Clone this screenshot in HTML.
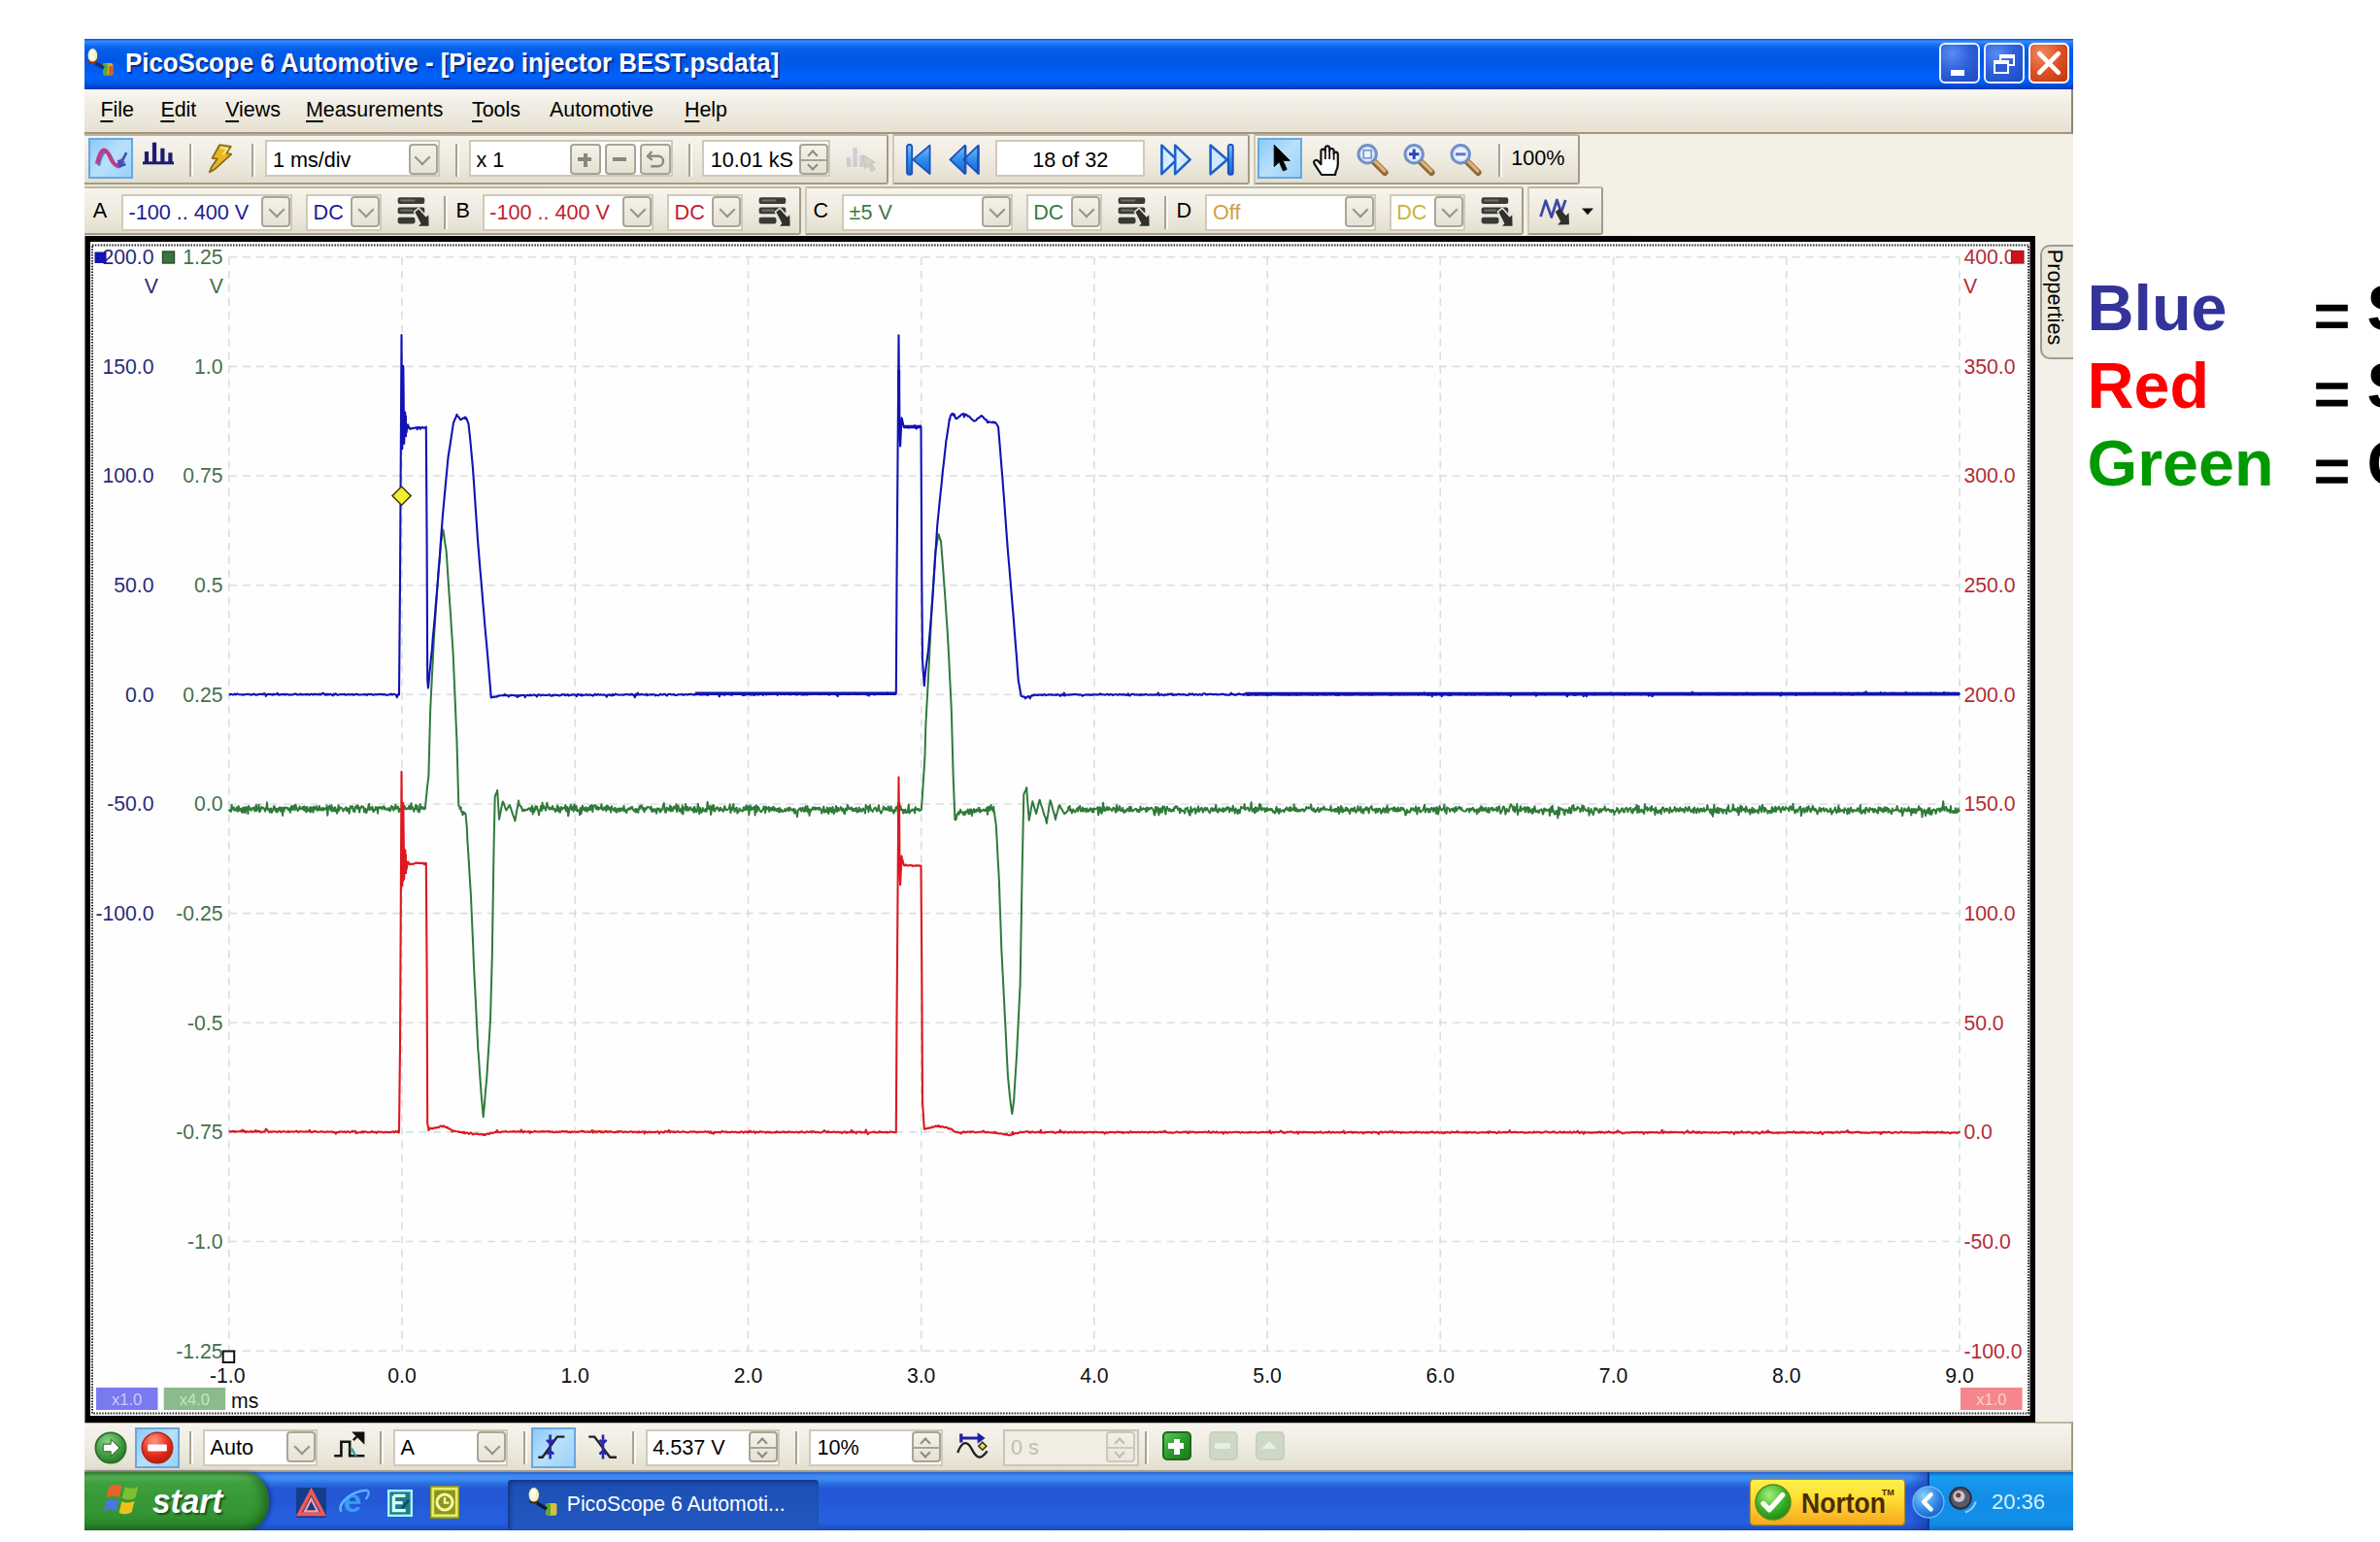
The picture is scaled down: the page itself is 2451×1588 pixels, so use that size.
<!DOCTYPE html>
<html>
<head>
<meta charset="utf-8">
<title>PicoScope 6 Automotive</title>
<style>
html,body{margin:0;padding:0;background:#fff;}
body{width:2451px;height:1588px;overflow:hidden;position:relative;font-family:"Liberation Sans",sans-serif;}
#scr{position:absolute;left:87px;top:40px;width:1024px;height:768px;transform:scale(2);transform-origin:0 0;
  font-family:"Liberation Sans",sans-serif;font-size:11px;color:#000;overflow:hidden;background:#ece9d8;}
#scr *{box-sizing:border-box;}
.abs{position:absolute;}
/* ---------- title bar ---------- */
#title{position:absolute;left:0;top:0;width:1024px;height:26px;
  background:linear-gradient(to bottom,#0a50d8 0%,#3a8cfc 5%,#1a74f6 11%,#0560ea 20%,#0056e4 42%,#005cf2 62%,#0062fc 76%,#005cf0 86%,#0046d0 94%,#0a36b4 100%);}
#title .cap{position:absolute;left:21px;top:4.200px;font-weight:bold;font-size:14px;color:#fff;white-space:nowrap;
  transform:scaleX(.922);transform-origin:0 0;text-shadow:1px 1px 0 #0a2a8a;}
.tb{position:absolute;top:2px;width:21px;height:21px;border:1px solid #e8f4ff;border-radius:3px;
  background:radial-gradient(circle at 30% 25%,#5a8cf4 0%,#2e62dc 45%,#1c48c0 100%);}
.tb.close{background:radial-gradient(circle at 30% 25%,#f08a60 0%,#de5024 50%,#c0360e 100%);border-color:#fff;}
/* ---------- menu ---------- */
#menu{position:absolute;left:0;top:26px;width:1024px;height:22.5px;
  background:linear-gradient(to bottom,#faf7f2 0%,#efede2 40%,#e8e1d2 100%);border-bottom:1px solid #a2967e;border-right:1px solid #8e8672;}
#menu span{position:absolute;top:3.900px;font-size:10.7px;white-space:nowrap;}
#menu u{text-decoration:underline;text-underline-offset:1.5px;}
/* ---------- tool strips ---------- */
.panel{position:absolute;left:0;width:1024px;background:linear-gradient(to right,#ebe7d8,#f3f1e6 80%);}
.strip{position:absolute;height:25px;border-radius:0 1.5px 1.5px 0;
  background:linear-gradient(to bottom,#f7f4ee 0%,#efebe0 50%,#e3decf 100%);
  border-bottom:1px solid #a39b88;border-right:1px solid #a39b88;border-top:1px solid #bdb5a2;border-left:1px solid #cfc8b6;}
.sep{position:absolute;width:1px;height:17px;background:#a8a293;box-shadow:1px 0 0 #fbfaf6;}
.cb{position:absolute;height:19px;background:#fff;border:1px solid #cfcab9;font-size:10.8px;line-height:17px;white-space:nowrap;}
.cb .t{position:absolute;top:0.3px;}
.dd{position:absolute;top:.7px;width:15px;height:15.6px;border:1px solid #a9a698;border-radius:2px;
  background:linear-gradient(#f3f1e9,#e6e2d5);}
.dd:after{content:"";position:absolute;left:3.9px;top:3.2px;width:5px;height:5px;border-right:1.3px solid #96938a;border-bottom:1.3px solid #96938a;transform:rotate(45deg);}
.sp{position:absolute;top:.7px;width:15px;height:15.6px;border:1px solid #a7a496;border-radius:2px;
  background:linear-gradient(#f4f2ea,#e4e0d2);}
.sp:before{content:"";position:absolute;left:0;right:0;top:6.6px;height:1px;background:#a7a496;}
.sp i{position:absolute;left:4.3px;width:4px;height:4px;border-left:1.2px solid #8d8a7e;border-top:1.2px solid #8d8a7e;}
.sp i.u{top:2.8px;transform:rotate(45deg);}
.sp i.d{top:7.8px;transform:rotate(225deg);}
.lbl{position:absolute;font-size:10.8px;white-space:nowrap;}
.hl{position:absolute;border:1px solid #6aa6e0;background:linear-gradient(135deg,#8ccaf6 0%,#b8e0fa 50%,#9ad2f8 100%);}
.sbtn{position:absolute;width:16px;height:16px;border:1px solid #a7a496;border-radius:2px;background:linear-gradient(#f4f2ea,#e4e0d2);}
svg.ic{position:absolute;overflow:visible;}
/* ---------- task bar ---------- */
#task{position:absolute;left:0;top:738px;width:1024px;height:30px;
  background:linear-gradient(to bottom,#2a62cc 0%,#3a8af2 6%,#3c8cf4 12%,#2c6ee2 20%,#2458d6 28%,#2456d6 45%,#255edc 70%,#2560de 86%,#2156d0 93%,#1c48b4 100%);}
#start{position:absolute;left:0;top:0;width:95px;height:30px;border-radius:0 12px 12px 0 / 0 15px 15px 0;
  background:linear-gradient(to bottom,#3c8c3c 0%,#56b456 8%,#3fa23f 18%,#379a37 40%,#339633 70%,#2c8a2c 88%,#236f23 100%);
  box-shadow:inset -3px 0 5px rgba(20,70,20,.55), 1px 0 2px rgba(10,30,90,.6);}
#start b{position:absolute;left:34.6px;top:4.800px;font-size:17.800px;font-style:italic;font-weight:bold;color:#fff;transform:scaleX(.94);transform-origin:0 0;
  text-shadow:1px 1px 1px #1c501c;}
#tray{position:absolute;left:949px;top:0;width:75px;height:30px;border-left:1px solid #0e3a96;
  background:linear-gradient(to bottom,#0e62c0 0%,#18a0f0 8%,#1696ec 18%,#128ce6 50%,#1290ea 80%,#1086e0 92%,#0c6cc4 100%);}
#tbtn{position:absolute;left:218px;top:4px;width:159.5px;height:26px;border-radius:2px;
  background:linear-gradient(#1c4cb0,#1e52b8 30%,#2158c0);box-shadow:inset 1px 1px 2px #123480;color:#fff;}
/* ---------- legend ---------- */
.leg{position:absolute;font-weight:bold;font-size:66.5px;line-height:80px;white-space:nowrap;}
</style>
</head>
<body>
<div id="scr">
  <!-- title bar -->
  <div id="title">
    <svg class="ic" style="left:1px;top:4px" width="17" height="17" viewBox="0 0 17 17">
      <ellipse cx="3.2" cy="4.6" rx="2.4" ry="3.6" fill="#f4f0b8"/><ellipse cx="3" cy="4.2" rx="1.2" ry="2.4" fill="#fffef0"/>
      <path d="M1 6.5q2.2 2.6 4.4 0v1.6q-2.2 1.6-4.4 0z" fill="#a03028"/>
      <rect x="8.5" y="8.5" width="5.2" height="6.2" rx="1" fill="#c8b030"/><rect x="8.5" y="8.5" width="2.4" height="6.2" rx="1" fill="#58a838"/>
      <path d="M4.5 8.5L9 11" stroke="#203060" stroke-width="1.6"/><rect x="11.6" y="10" width="2.2" height="4.6" fill="#d06020"/>
    </svg>
    <div class="cap">PicoScope 6 Automotive - [Piezo injector BEST.psdata]</div>
    <div class="tb" style="left:955px"><i class="abs" style="left:4.5px;top:13px;width:7px;height:3px;background:#fff"></i></div>
    <div class="tb" style="left:978px">
      <i class="abs" style="left:7px;top:4.5px;width:7.5px;height:6.5px;border:1px solid #fff;border-top-width:2px"></i>
      <i class="abs" style="left:4.2px;top:7.6px;width:7.5px;height:7px;border:1px solid #fff;border-top-width:2.2px;background:#2c5cd4"></i>
    </div>
    <div class="tb close" style="left:1001px">
      <svg class="ic" style="left:0;top:0" width="19" height="19" viewBox="0 0 19 19"><path d="M4.6 4.6L14.4 14.4M14.4 4.6L4.6 14.4" stroke="#fff" stroke-width="2.3" stroke-linecap="round"/></svg>
    </div>
  </div>
  <!-- menu bar -->
  <div id="menu">
    <span style="left:8.2px"><u>F</u>ile</span>
    <span style="left:39.2px"><u>E</u>dit</span>
    <span style="left:72.6px"><u>V</u>iews</span>
    <span style="left:114px"><u>M</u>easurements</span>
    <span style="left:199.5px"><u>T</u>ools</span>
    <span style="left:239.5px">Automotive</span>
    <span style="left:309px"><u>H</u>elp</span>
  </div>
    <!-- shared svg symbols -->
  <svg width="0" height="0" style="position:absolute">
    <defs>
      
      <linearGradient id="nav" x1="0" y1="0" x2="0" y2="1"><stop offset="0" stop-color="#7cc0f8"/><stop offset=".5" stop-color="#2f8cec"/><stop offset="1" stop-color="#1a62cc"/></linearGradient>
      
    </defs>
  </svg>

  <!-- ================= row 1 ================= -->
  <div class="panel" style="top:48.5px;height:27.5px"></div>
  <div class="strip" style="left:-2px;top:49.3px;width:415.5px;height:25.6px"></div>
  <div class="strip" style="left:416px;top:49.3px;width:183.5px;height:25.6px"></div>
  <div class="strip" style="left:602px;top:49.3px;width:167.5px;height:25.6px"></div>

  <div class="hl" style="left:2.2px;top:51.4px;width:22.4px;height:20.8px"></div>
  <svg class="ic" style="left:4.6px;top:54px" width="18" height="15" viewBox="0 0 18 15">
    <path d="M1.4 10.4C3.4 1.6 5.8 1.6 8.2 7S12.6 12 14.4 8" fill="none" stroke="#5a78d8" stroke-width="1.6" transform="translate(.9,.9)"/>
    <path d="M1.4 10.4C3.4 1.6 5.8 1.6 8.2 7S12.6 12 14.4 8" fill="none" stroke="#c03c82" stroke-width="2"/>
    <path d="M13.2 11.2l3.4-6.6M12.6 8.4l.6 3 3-.8" fill="none" stroke="#3c50b4" stroke-width="1.3"/>
  </svg>
  <svg class="ic" style="left:29.6px;top:52.6px" width="16" height="12" viewBox="0 0 16 12">
    <path d="M0 10.9h16" stroke="#1c1c70" stroke-width="1.5"/>
    <path d="M2 11V5M6 11V.4M10.2 11V3.4M14.2 11V5.6" stroke="#1c1c70" stroke-width="2.1"/>
  </svg>
  <div class="sep" style="left:53.8px;top:53.5px"></div>
  <svg class="ic" style="left:63px;top:54px" width="14" height="15" viewBox="0 0 14 15">
    <path d="M6.6 .6l5.8 .8-2.2 3.4 2.4 .6-8.6 7.8-2.6 1.4 1-2.6 3-4.2-2.6-.4z" fill="#e8b828" stroke="#8a6a18" stroke-width=".9" stroke-linejoin="round"/>
    <path d="M7 2l3.6 .6-2.2 3" fill="none" stroke="#fbe88a" stroke-width="1"/>
  </svg>
  <div class="sep" style="left:85.9px;top:53.5px"></div>

  <div class="cb" style="left:92.8px;top:52.3px;width:90.4px"><span class="t" style="left:3.2px">1 ms/div</span><i class="dd" style="left:72.8px"></i></div>
  <div class="sep" style="left:190.9px;top:53.5px"></div>
  <div class="cb" style="left:198.2px;top:52.3px;width:105px"><span class="t" style="left:2.6px">x 1</span>
    <i class="sbtn" style="left:50.6px;top:1px"><b class="abs" style="left:3.6px;top:5.9px;width:6.8px;height:2.2px;background:#8a877c"></b><b class="abs" style="left:5.9px;top:3.6px;width:2.2px;height:6.8px;background:#8a877c"></b></i>
    <i class="sbtn" style="left:68.5px;top:1px"><b class="abs" style="left:3.8px;top:5.9px;width:6.4px;height:2.2px;background:#8a877c"></b></i>
    <i class="sbtn" style="left:86.5px;top:1px"><svg class="ic" style="left:2px;top:2px" width="10" height="10" viewBox="0 0 10 10"><path d="M3.2 1L1 3.4 3.4 5.4M1.2 3.4H6.4A2.5 2.5 0 0 1 6.4 8.6H2.6" fill="none" stroke="#8d8a7e" stroke-width="1.2"/></svg></i>
  </div>
  <div class="sep" style="left:310.8px;top:53.5px"></div>
  <div class="cb" style="left:318px;top:52.3px;width:66.4px"><span class="t" style="left:3.4px">10.01 kS</span><i class="sp" style="left:48.8px"><i class="u"></i><i class="d"></i></i></div>
  <svg class="ic" style="left:391.5px;top:54px;opacity:.55" width="17" height="15" viewBox="0 0 17 15">
    <path d="M1.5 12V7M4.8 12V2M8.2 12V6" stroke="#b7b4c8" stroke-width="2.2"/>
    <path d="M9 6l6 3.6-2 .6 2 3-1.6 1-1.8-3-1.6 1.4z" fill="#c4c0b8" stroke="#aaa69a" stroke-width=".6"/>
  </svg>

  <!-- buffer navigation -->
  <svg class="ic" style="left:423.4px;top:53.6px" width="13" height="16.4" viewBox="0 0 13 16.4">
    <rect x=".5" y=".5" width="2.6" height="15.4" rx="1" fill="url(#nav)" stroke="#1a50b8" stroke-width=".9"/>
    <path d="M12.3 .8v14.8L3.6 8.2z" fill="url(#nav)" stroke="#1a50b8" stroke-width=".9" stroke-linejoin="round"/>
  </svg>
  <svg class="ic" style="left:445.4px;top:53.6px" width="16" height="16.4" viewBox="0 0 16 16.4">
    <path d="M8.4 .8v14.8L.7 8.2z" fill="url(#nav)" stroke="#1a50b8" stroke-width=".9" stroke-linejoin="round"/>
    <path d="M15.3 .8v14.8L7.6 8.2z" fill="url(#nav)" stroke="#1a50b8" stroke-width=".9" stroke-linejoin="round"/>
    <path d="M8.6 1v14.4M15.2 1v14.4" stroke="#1a50b8" stroke-width="1.2"/>
  </svg>
  <div class="cb" style="left:469px;top:52.3px;width:77.2px;text-align:center"><span class="t" style="left:0;right:0">18 of 32</span></div>
  <svg class="ic" style="left:554px;top:53.6px" width="16" height="16.4" viewBox="0 0 16 16.4">
    <path d="M.7 .8v14.8L8.4 8.2z" fill="#d8ecfc" stroke="#1a62cc" stroke-width="1.3" stroke-linejoin="round"/>
    <path d="M7.6 .8v14.8L15.3 8.2z" fill="#d8ecfc" stroke="#1a62cc" stroke-width="1.3" stroke-linejoin="round"/>
  </svg>
  <svg class="ic" style="left:579.4px;top:53.6px" width="13" height="16.4" viewBox="0 0 13 16.4">
    <path d="M.8 .8v14.8L9.4 8.2z" fill="#cfe6fb" stroke="#1a62cc" stroke-width="1.3" stroke-linejoin="round"/>
    <rect x="9.9" y=".5" width="2.5" height="15.4" rx="1" fill="url(#nav)" stroke="#1a50b8" stroke-width=".9"/>
  </svg>

  <!-- pointer tools -->
  <div class="hl" style="left:604.2px;top:51.2px;width:22.6px;height:21px"></div>
  <svg class="ic" style="left:611.5px;top:54.2px" width="10" height="15" viewBox="0 0 10 15">
    <path d="M.6 .6v11.2l2.6-2.4 2 4.6 1.9-.8-2-4.5h3.6z" fill="#000" stroke="#111" stroke-width=".5" stroke-linejoin="round"/>
  </svg>
  <svg class="ic" style="left:631.6px;top:53.6px" width="17" height="17" viewBox="0 0 17 17">
    <path d="M5 16L1.4 10.6q-.9-1.6.5-2.1 1-.3 1.9 1l.9 1.1V4q0-1.2 1.1-1.2T6.9 4V2.4q0-1.2 1.1-1.2t1.1 1.2V3.6q0-1.1 1.1-1.1t1.1 1.2v1.6q0-1 1-1t1.100 1.2V10.400q0 2.200-1 3.800L12 16z" fill="#fff" stroke="#111" stroke-width="1.1" stroke-linejoin="round"/>
    <path d="M6.9 4v4M9.100 3.600v4.400M11.300 5v3.400" stroke="#111" stroke-width=".9"/>
  </svg>
  <svg class="ic" style="left:655.2px;top:53.6px" width="17" height="17" viewBox="0 0 17 17"><path d="M8.2 8.4L14.6 14.8" stroke="#8a6a40" stroke-width="3.4" stroke-linecap="round"/>
        <path d="M8.6 8.2L14.4 14" stroke="#e8b070" stroke-width="1.6" stroke-linecap="round"/>
        <circle cx="5.6" cy="5.4" r="4.6" fill="#d8e6fa" stroke="#7090c8" stroke-width="1.5"/>
        <circle cx="5.6" cy="5.4" r="3" fill="#f2f7ff" opacity=".8"/><rect x="3.6" y="3.4" width="4" height="4" fill="none" stroke="#7d9ad0" stroke-width=".9"/></svg>
  <svg class="ic" style="left:679.2px;top:53.6px" width="17" height="17" viewBox="0 0 17 17"><path d="M8.2 8.4L14.6 14.8" stroke="#8a6a40" stroke-width="3.4" stroke-linecap="round"/>
        <path d="M8.6 8.2L14.4 14" stroke="#e8b070" stroke-width="1.6" stroke-linecap="round"/>
        <circle cx="5.6" cy="5.4" r="4.6" fill="#d8e6fa" stroke="#7090c8" stroke-width="1.5"/>
        <circle cx="5.6" cy="5.4" r="3" fill="#f2f7ff" opacity=".8"/><path d="M3 5.4h5.2M5.6 2.8v5.2" stroke="#2848b0" stroke-width="1.5"/></svg>
  <svg class="ic" style="left:703.2px;top:53.6px" width="17" height="17" viewBox="0 0 17 17"><path d="M8.2 8.4L14.6 14.8" stroke="#8a6a40" stroke-width="3.4" stroke-linecap="round"/>
        <path d="M8.6 8.2L14.4 14" stroke="#e8b070" stroke-width="1.6" stroke-linecap="round"/>
        <circle cx="5.6" cy="5.4" r="4.6" fill="#d8e6fa" stroke="#7090c8" stroke-width="1.5"/>
        <circle cx="5.6" cy="5.4" r="3" fill="#f2f7ff" opacity=".8"/><path d="M3 5.4h5.2" stroke="#5a78c4" stroke-width="1.5"/></svg>
  <div class="sep" style="left:727.8px;top:53.5px"></div>
  <div class="lbl" style="left:734.6px;top:55.4px;line-height:13px">100%</div>

  <!-- ================= row 2 ================= -->
  <div class="panel" style="top:76px;height:26px"></div>
  <div class="strip" style="left:-2px;top:76.3px;width:370.8px;height:25.2px"></div>
  <div class="strip" style="left:371px;top:76.3px;width:369.8px;height:25.2px"></div>
  <div class="strip" style="left:743px;top:76.3px;width:38.6px;height:25.2px"></div>

  <div class="lbl" style="left:4.4px;top:81.9px;line-height:13px">A</div>
  <div class="cb" style="left:19.2px;top:79.6px;width:88px;color:#1c1c90"><span class="t" style="left:2.6px">-100 .. 400 V</span><i class="dd" style="left:70.8px"></i></div>
  <div class="cb" style="left:114px;top:79.6px;width:39px;color:#1c1c90"><span class="t" style="left:2.8px">DC</span><i class="dd" style="left:21.8px"></i></div>
  <svg class="ic" style="left:160.8px;top:80.8px" width="17" height="17" viewBox="0 0 16 16"><rect x="0.3" y="0.6" width="13" height="3.2" rx="1" fill="#3a3a36"/>
        <rect x="0.3" y="5.4" width="13" height="3.2" rx="1" fill="#3a3a36"/>
        <rect x="0.3" y="10.2" width="8.4" height="3.2" rx="1" fill="#3a3a36"/>
        <rect x="1.6" y="1.6" width="7" height="1" fill="#70706a"/><rect x="1.6" y="6.4" width="6" height="1" fill="#70706a"/>
        <path d="M8.2 7.6l2.2-1.8 3.6 3.9 1.5-1.4 .2 6.4-6.2.1 1.6-1.6z" fill="#30302c" stroke="#e8e4d8" stroke-width=".7"/></svg>
  <div class="sep" style="left:185px;top:80.5px"></div>

  <div class="lbl" style="left:191.3px;top:81.9px;line-height:13px">B</div>
  <div class="cb" style="left:205px;top:79.6px;width:88px;color:#c02030"><span class="t" style="left:2.6px">-100 .. 400 V</span><i class="dd" style="left:70.8px"></i></div>
  <div class="cb" style="left:300px;top:79.6px;width:39.2px;color:#c02030"><span class="t" style="left:2.8px">DC</span><i class="dd" style="left:22px"></i></div>
  <svg class="ic" style="left:346.5px;top:80.8px" width="17" height="17" viewBox="0 0 16 16"><rect x="0.3" y="0.6" width="13" height="3.2" rx="1" fill="#3a3a36"/>
        <rect x="0.3" y="5.4" width="13" height="3.2" rx="1" fill="#3a3a36"/>
        <rect x="0.3" y="10.2" width="8.4" height="3.2" rx="1" fill="#3a3a36"/>
        <rect x="1.6" y="1.6" width="7" height="1" fill="#70706a"/><rect x="1.6" y="6.4" width="6" height="1" fill="#70706a"/>
        <path d="M8.2 7.6l2.2-1.8 3.6 3.9 1.5-1.4 .2 6.4-6.2.1 1.6-1.6z" fill="#30302c" stroke="#e8e4d8" stroke-width=".7"/></svg>

  <div class="lbl" style="left:375.2px;top:81.9px;line-height:13px">C</div>
  <div class="cb" style="left:389.8px;top:79.6px;width:88.4px;color:#3a7a42"><span class="t" style="left:3px">&#177;5 V</span><i class="dd" style="left:71.2px"></i></div>
  <div class="cb" style="left:485px;top:79.6px;width:39.2px;color:#3a7a42"><span class="t" style="left:2.6px">DC</span><i class="dd" style="left:22px"></i></div>
  <svg class="ic" style="left:531.5px;top:80.8px" width="17" height="17" viewBox="0 0 16 16"><rect x="0.3" y="0.6" width="13" height="3.2" rx="1" fill="#3a3a36"/>
        <rect x="0.3" y="5.4" width="13" height="3.2" rx="1" fill="#3a3a36"/>
        <rect x="0.3" y="10.2" width="8.4" height="3.2" rx="1" fill="#3a3a36"/>
        <rect x="1.6" y="1.6" width="7" height="1" fill="#70706a"/><rect x="1.6" y="6.4" width="6" height="1" fill="#70706a"/>
        <path d="M8.2 7.6l2.2-1.8 3.6 3.9 1.5-1.4 .2 6.4-6.2.1 1.6-1.6z" fill="#30302c" stroke="#e8e4d8" stroke-width=".7"/></svg>
  <div class="sep" style="left:556px;top:80.5px"></div>

  <div class="lbl" style="left:562.2px;top:81.9px;line-height:13px">D</div>
  <div class="cb" style="left:577px;top:79.6px;width:88.2px;color:#d0a040"><span class="t" style="left:3px">Off</span><i class="dd" style="left:71px"></i></div>
  <div class="cb" style="left:671.8px;top:79.6px;width:39.6px;color:#c8b440"><span class="t" style="left:2.8px">DC</span><i class="dd" style="left:22.2px"></i></div>
  <svg class="ic" style="left:718.6px;top:80.8px" width="17" height="17" viewBox="0 0 16 16"><rect x="0.3" y="0.6" width="13" height="3.2" rx="1" fill="#3a3a36"/>
        <rect x="0.3" y="5.4" width="13" height="3.2" rx="1" fill="#3a3a36"/>
        <rect x="0.3" y="10.2" width="8.4" height="3.2" rx="1" fill="#3a3a36"/>
        <rect x="1.6" y="1.6" width="7" height="1" fill="#70706a"/><rect x="1.6" y="6.4" width="6" height="1" fill="#70706a"/>
        <path d="M8.2 7.6l2.2-1.8 3.6 3.9 1.5-1.4 .2 6.4-6.2.1 1.6-1.6z" fill="#30302c" stroke="#e8e4d8" stroke-width=".7"/></svg>

  <svg class="ic" style="left:749px;top:80.6px" width="18" height="16" viewBox="0 0 18 16">
    <path d="M.8 10.6L3.4 2.4l3 8.4L9.2 2l2.2 6.4L13.6 2" fill="none" stroke="#3c48a8" stroke-width="1.4" stroke-linejoin="round"/>
    <path d="M8.4 8l2.2-1.6 3.2 3.6 1.5-1.4 .2 6-6 .1 1.6-1.6z" fill="#30302c"/>
  </svg>
  <svg class="ic" style="left:771px;top:87.4px" width="6" height="4" viewBox="0 0 6 4"><path d="M0 .2h6L3 3.6z" fill="#111"/></svg>

    <!-- ================= right-hand properties strip ================= -->
  <div class="abs" style="left:1004.5px;top:101.5px;width:19.5px;height:611px;background:#f2f0e9"></div>
  <div class="abs" style="left:1007.2px;top:106px;width:18px;height:59.4px;background:#ebe8dc;border:1px solid #9c9a92;border-right:0;border-radius:5px 0 0 5px"></div>
  <div class="abs" style="left:1014.8px;top:133.4px;width:0;height:0">
    <div class="abs" style="left:-30px;top:-7px;width:60px;height:14px;line-height:14px;text-align:center;transform:rotate(90deg);font-size:10.8px;white-space:nowrap">Properties</div>
  </div>

  <!-- ================= bottom tool strip ================= -->
  <div class="panel" style="top:712.3px;height:26px"></div>
  <div class="strip" style="left:-2px;top:712.4px;width:1026px;height:25.4px;border-radius:0"></div>

  <svg class="ic" style="left:5.4px;top:716.8px" width="17" height="17" viewBox="0 0 17 17">
    <defs><radialGradient id="gg" cx=".4" cy=".3" r=".8"><stop offset="0" stop-color="#8ad48a"/><stop offset=".6" stop-color="#3c9a3c"/><stop offset="1" stop-color="#226c22"/></radialGradient></defs>
    <circle cx="8.5" cy="8.5" r="7.8" fill="url(#gg)" stroke="#2c6e2c" stroke-width=".9"/>
    <path d="M4.6 6.6h4V4.2l4.4 4.3-4.4 4.3v-2.4h-4z" fill="#fff" stroke="#2a5a2a" stroke-width=".5"/>
  </svg>
  <div class="hl" style="left:25.8px;top:714.5px;width:22.8px;height:21.6px"></div>
  <svg class="ic" style="left:29.2px;top:716.8px" width="17" height="17" viewBox="0 0 17 17">
    <defs><radialGradient id="rg" cx=".4" cy=".28" r=".8"><stop offset="0" stop-color="#ff9a88"/><stop offset=".55" stop-color="#e8301e"/><stop offset="1" stop-color="#b01408"/></radialGradient></defs>
    <circle cx="8.5" cy="8.5" r="7.9" fill="url(#rg)" stroke="#b02818" stroke-width=".7"/>
    <rect x="3.6" y="6.8" width="9.8" height="3.4" rx=".6" fill="#fff"/>
  </svg>
  <div class="sep" style="left:54px;top:716.5px"></div>
  <div class="cb" style="left:61px;top:715.8px;width:59.4px"><span class="t" style="left:2.8px">Auto</span><i class="dd" style="left:42px"></i></div>
  <svg class="ic" style="left:127.6px;top:716.8px" width="17" height="17" viewBox="0 0 17 17">
    <path d="M.6 12.6h3.6V5.4h4.4v7.2h7.6" fill="none" stroke="#111" stroke-width="1.3"/>
    <path d="M8.8 8.4c1.4.2 1.6 4 3.4 4" fill="none" stroke="#3a9aa0" stroke-width="1.2"/>
    <path d="M10.4 4.6L13 2M11 .8h4.6v4.6z" fill="#111" stroke="#111" stroke-width="1.2"/>
  </svg>
  <div class="sep" style="left:152px;top:716.5px"></div>
  <div class="cb" style="left:159px;top:715.8px;width:59.4px"><span class="t" style="left:2.8px">A</span><i class="dd" style="left:42.2px"></i></div>
  <div class="sep" style="left:226px;top:716.5px"></div>
  <div class="hl" style="left:230px;top:714.5px;width:22.6px;height:21.6px"></div>
  <svg class="ic" style="left:233.4px;top:717.6px" width="16" height="15" viewBox="0 0 16 15">
    <path d="M.6 12.4h2.2l7.6-10.6h3.8" fill="none" stroke="#222" stroke-width="1.2"/>
    <path d="M6.8 .8v12.4M5 3.4l1.8 1.8 1.8-1.8M5 10.8l1.8-1.8 1.8 1.8" fill="none" stroke="#2828a8" stroke-width="1.3"/>
  </svg>
  <svg class="ic" style="left:258.6px;top:717.6px" width="16" height="15" viewBox="0 0 16 15">
    <path d="M.6 1.8h3l8 10.6h3.4" fill="none" stroke="#222" stroke-width="1.2"/>
    <path d="M8 .8v12.4M6.2 3.4l1.8 1.8 1.8-1.8M6.2 10.8l1.8-1.8 1.8 1.8" fill="none" stroke="#2828a8" stroke-width="1.3"/>
  </svg>
  <div class="sep" style="left:282px;top:716.5px"></div>
  <div class="cb" style="left:288.8px;top:715.8px;width:69.4px"><span class="t" style="left:2.8px">4.537 V</span><i class="sp" style="left:52.4px"><i class="u"></i><i class="d"></i></i></div>
  <div class="sep" style="left:366px;top:716.5px"></div>
  <div class="cb" style="left:373px;top:715.8px;width:69.4px"><span class="t" style="left:3.2px">10%</span><i class="sp" style="left:52.2px"><i class="u"></i><i class="d"></i></i></div>
  <svg class="ic" style="left:449.4px;top:717px" width="17" height="16" viewBox="0 0 17 16">
    <path d="M2.4 1.2v4.6M2.4 3.5h9.4" stroke="#2020a0" stroke-width="1.6"/><path d="M10.8 .6l4 2.9-4 2.9z" fill="#2020a0"/>
    <path d="M.6 11C3 4.8 5.6 4.6 8 9.4s4.6 5.4 7.8.8" fill="none" stroke="#222" stroke-width="1.2"/>
    <path d="M13.4 5.6l2 2-2 2-2-2z" fill="#e8e040" stroke="#333" stroke-width=".8"/>
  </svg>
  <div class="cb" style="left:472.8px;top:715.8px;width:69.8px;background:#f1ede3;border-color:#c9c5b6;color:#c2beb2"><span class="t" style="left:3.2px">0 s</span><i class="sp" style="left:52.4px;opacity:.5"><i class="u"></i><i class="d"></i></i></div>
  <div class="sep" style="left:546px;top:716.5px"></div>
  <div class="abs" style="left:554.8px;top:717.3px;width:15px;height:15px;border-radius:2.5px;border:1px solid #1e6a1e;background:linear-gradient(135deg,#5cc85c 0%,#2c9a2c 50%,#1c7a1c 100%)">
    <i class="abs" style="left:2.5px;top:5.2px;width:8px;height:2.6px;background:#fff"></i><i class="abs" style="left:5.2px;top:2.5px;width:2.6px;height:8px;background:#fff"></i>
  </div>
  <div class="abs" style="left:578.8px;top:717.3px;width:15px;height:15px;border-radius:2.5px;border:1px solid #c6d2bc;background:#cdd9c4">
    <i class="abs" style="left:2.5px;top:5.2px;width:8px;height:2.4px;background:#e8eee2"></i>
  </div>
  <div class="abs" style="left:602.8px;top:717.3px;width:15px;height:15px;border-radius:2.5px;border:1px solid #c6d2bc;background:#cdd9c4">
    <i class="abs" style="left:2.5px;top:4px;width:0;height:0;border-left:4px solid transparent;border-right:4px solid transparent;border-bottom:4.4px solid #e8eee2"></i>
  </div>

  <!-- ================= task bar ================= -->
  <div id="task">
    <div id="start">
      <svg class="ic" style="left:11.400px;top:5.200px" width="19.500" height="18.500" viewBox="0 0 19 18">
        <path d="M1.6 2.4q3-1.8 6.4-.2l-1.4 5.6q-3.2-1.4-6.4.2z" fill="#e8622c"/>
        <path d="M9.6 2.6q3.2 1.4 6.6-.2l-1.4 5.6q-3.4 1.8-6.6 .2z" fill="#7cc030"/>
        <path d="M.2 9.6q3-1.8 6.2-.2l-1.4 5.4q-3-1.6-6.2 .2z" fill="#4878d8"/>
        <path d="M8 9.8q3.2 1.4 6.4-.2l-1.4 5.6q-3.2 1.8-6.4 .2z" fill="#f0c020"/>
      </svg>
      <b>start</b>
    </div>
    <!-- quick launch -->
    <svg class="ic" style="left:109px;top:7.600px" width="15.500" height="15.500" viewBox="0 0 17 17">
      <rect width="17" height="17" fill="#143c8c"/>
      <path d="M8.5 2L15.4 15H1.6z" fill="none" stroke="#f05858" stroke-width="2"/><path d="M8.5 6.4l3.6 7H4.9z" fill="none" stroke="#f8a0a0" stroke-width="1.2"/>
    </svg>
    <svg class="ic" style="left:131.4px;top:7.4px" width="16" height="16" viewBox="0 0 16 16">
      <text x="2.2" y="13.6" font-family="Liberation Sans, sans-serif" font-weight="bold" font-size="17" fill="#3a9cf2">e</text>
      <path d="M1.200 13.400C-1 9 6.500 2.600 14.800 2.400" fill="none" stroke="#58b4fa" stroke-width="1.300"/>
      <path d="M14.800 2.400c1 1.400 0 3.400-1 4.600" fill="none" stroke="#58b4fa" stroke-width="1.100"/>
    </svg>
    <svg class="ic" style="left:156.400px;top:8.600px" width="13" height="14" viewBox="0 0 13 14">
      <rect x=".6" y=".6" width="11.800" height="12.800" fill="#1c7c88" stroke="#a8f4f4" stroke-width="1.200"/>
      <path d="M3.200 3.200h6M3.200 3.200v7.600h6.200M3.200 6.800h4.600" fill="none" stroke="#d8ffff" stroke-width="1.700"/>
      <path d="M7.500 9.500l3.500-4" stroke="#0c4c58" stroke-width="1.200"/>
    </svg>
    <svg class="ic" style="left:177.8px;top:7px" width="15" height="17" viewBox="0 0 15 17">
      <rect width="15" height="17" fill="#8c9420"/><rect x="1.4" y="1.6" width="12.2" height="13.8" fill="none" stroke="#e8ec60" stroke-width="1.4"/>
      <circle cx="7.5" cy="8.5" r="4" fill="none" stroke="#f4f8a0" stroke-width="1.5"/><path d="M7.5 6v2.8h2.2" fill="none" stroke="#f4f8a0" stroke-width="1.2"/>
    </svg>
    <!-- task button -->
    <div id="tbtn">
      <svg class="ic" style="left:10px;top:3px" width="17" height="17" viewBox="0 0 17 17">
        <ellipse cx="3.4" cy="4.8" rx="2.6" ry="3.8" fill="#f4f0b8"/><ellipse cx="3.2" cy="4.2" rx="1.3" ry="2.4" fill="#fffef0"/>
        <path d="M1 7q2.4 2.6 4.8 0v1.6q-2.4 1.6-4.8 0z" fill="#403020"/>
        <rect x="9.6" y="9" width="5.6" height="6.4" rx="1" fill="#d8c038"/><rect x="9.6" y="9" width="2.4" height="6.4" rx="1" fill="#58a838"/>
        <path d="M5 9l5 3" stroke="#101840" stroke-width="1.8"/>
      </svg>
      <div class="abs" style="left:30.4px;top:5.6px;font-size:10.6px;line-height:13px;white-space:nowrap">PicoScope 6 Automoti...</div>
    </div>
    <!-- norton -->
    <div class="abs" style="left:858.2px;top:4.3px;width:78.6px;height:23px;border-radius:1.5px;background:linear-gradient(#fff04a 0%,#fee236 35%,#fbc42a 70%,#f6a81e 100%);box-shadow:0 0 0 .6px #b08820">
      <svg class="ic" style="left:2px;top:2px" width="19" height="19" viewBox="0 0 19 19">
        <defs><radialGradient id="ng" cx=".4" cy=".3" r=".8"><stop offset="0" stop-color="#a8f078"/><stop offset=".55" stop-color="#38b428"/><stop offset="1" stop-color="#1c7c14"/></radialGradient></defs>
        <circle cx="9.5" cy="9.5" r="9" fill="url(#ng)" stroke="#5a8a20" stroke-width=".8"/>
        <path d="M4.4 10.2l3.2 3.2 6.8-7.6" fill="none" stroke="#fff" stroke-width="2.6" stroke-linecap="round" stroke-linejoin="round"/>
      </svg>
      <div class="abs" style="left:25.6px;top:3.6px;font-weight:bold;font-size:14.6px;line-height:16px;color:#4a2c04;transform:scaleX(.91);transform-origin:0 0">Norton</div>
      <div class="abs" style="left:67.2px;top:3.4px;font-weight:bold;font-size:4.5px;line-height:5px;color:#4a2c04">TM</div>
    </div>
    <div class="abs" style="left:940px;top:0;width:9px;height:30px;background:linear-gradient(to right,rgba(30,70,190,0),rgba(22,52,160,.55))"></div>
    <!-- tray -->
    <div id="tray">
      <svg class="ic" style="left:-9.400px;top:6.600px" width="17" height="17" viewBox="0 0 17 17">
        <defs><radialGradient id="cg" cx=".35" cy=".3" r=".8"><stop offset="0" stop-color="#8cd0fa"/><stop offset=".6" stop-color="#2c84e4"/><stop offset="1" stop-color="#1a5cc4"/></radialGradient></defs>
        <circle cx="8.5" cy="8.5" r="8" fill="url(#cg)" stroke="#6cb8f4" stroke-width=".7"/>
        <path d="M9.8 4.6L6 8.4l3.8 3.8" fill="none" stroke="#fff" stroke-width="2.2" stroke-linecap="round" stroke-linejoin="round"/>
      </svg>
      <svg class="ic" style="left:9.800px;top:7px" width="15" height="16" viewBox="0 0 16 17">
        <circle cx="6.4" cy="6.8" r="5.8" fill="#585868" stroke="#2a2a3a" stroke-width="1"/><circle cx="5.6" cy="5.8" r="3.2" fill="#c8c8d4"/><circle cx="5.2" cy="5.2" r="1.4" fill="#803838"/>
        <path d="M9 14.6q4.6-1.6 5.8-6" fill="none" stroke="#9cc8f4" stroke-width="1.1"/>
      </svg>
      <div class="abs" style="left:32px;top:8.600px;font-size:11px;line-height:13px;color:#d2f2ff">20:36</div>
    </div>
  </div>

  
</div>
<svg class="chart" width="2451" height="1588" viewBox="0 0 2451 1588" style="position:absolute;left:0;top:0" font-family="Liberation Sans, sans-serif">
<rect x="87.5" y="243" width="2008.5" height="1222" fill="#000"/>
<rect x="93" y="249" width="1997.5" height="1209" fill="#fefefe"/>
<rect x="95" y="252.5" width="1994" height="1203" fill="none" stroke="#222" stroke-width="2" stroke-dasharray="1.5 1.4"/>
<path d="M235.8 264.7V1391.2M235.8 264.7H2018.0M414.0 264.7V1391.2M235.8 377.4H2018.0M592.2 264.7V1391.2M235.8 490.0H2018.0M770.5 264.7V1391.2M235.8 602.7H2018.0M948.7 264.7V1391.2M235.8 715.3H2018.0M1126.9 264.7V1391.2M235.8 828.0H2018.0M1305.1 264.7V1391.2M235.8 940.6H2018.0M1483.3 264.7V1391.2M235.8 1053.2H2018.0M1661.6 264.7V1391.2M235.8 1165.9H2018.0M1839.8 264.7V1391.2M235.8 1278.5H2018.0M2018.0 264.7V1391.2M235.8 1391.2H2018.0" fill="none" stroke="#d7dfe1" stroke-width="1.6" stroke-dasharray="8 6"/>
<path d="M235.8 833.5L236.5 835.1L237.2 834.2L237.9 835.8L238.6 828.9L239.3 833.6L240.0 832.2L240.7 831.4L241.4 834.7L242.1 834.2L242.8 834.2L243.5 831.5L244.2 835.4L244.9 835.5L245.6 830.1L246.3 832.8L247.0 834.8L247.7 832.9L248.4 833.2L249.1 836.7L249.8 831.8L250.5 836.6L251.2 835.2L251.9 831.3L252.6 837.3L253.3 832.5L254.0 831.1L254.7 832.4L255.4 837.9L256.1 830.1L256.8 831.3L257.5 833.3L258.2 834.3L258.9 834.6L259.6 831.9L260.3 833.1L261.0 833.1L261.7 831.5L262.4 835.5L263.1 833.0L263.8 828.8L264.5 834.9L265.2 832.9L265.9 833.4L266.6 828.7L267.3 836.2L268.0 835.2L268.7 833.3L269.4 830.9L270.1 831.8L270.8 832.4L271.5 831.9L272.2 832.6L272.9 835.6L273.6 833.5L274.3 832.0L275.0 826.3L275.7 833.9L276.4 833.0L277.1 833.8L277.8 836.5L278.5 832.6L279.2 832.4L279.9 836.8L280.6 834.8L281.3 834.7L282.0 830.2L282.7 830.5L283.4 833.3L284.1 835.7L284.8 832.8L285.5 836.4L286.2 835.4L286.9 832.2L287.6 834.0L288.3 831.3L289.0 835.6L289.7 832.6L290.4 831.8L291.1 839.8L291.8 831.7L292.5 835.3L293.2 831.7L293.9 831.6L294.6 831.4L295.3 832.5L296.0 831.9L296.7 834.0L297.4 834.2L298.1 832.2L298.8 836.7L299.5 833.4L300.2 830.0L300.9 833.9L301.6 833.5L302.3 829.9L303.0 829.6L303.7 834.3L304.4 828.6L305.1 831.3L305.8 832.4L306.5 835.0L307.2 834.7L307.9 832.8L308.6 830.5L309.3 832.7L310.0 833.2L310.7 833.1L311.4 831.4L312.1 830.9L312.8 834.2L313.5 830.5L314.2 834.9L314.9 831.4L315.6 836.4L316.3 831.0L317.0 834.7L317.7 834.0L318.4 835.3L319.1 831.4L319.8 836.4L320.5 831.3L321.2 835.3L321.9 831.8L322.6 836.5L323.3 830.6L324.0 833.6L324.7 831.7L325.4 833.4L326.1 830.2L326.8 834.6L327.5 832.7L328.2 834.4L328.9 830.0L329.6 832.7L330.3 834.5L331.0 834.3L331.7 832.0L332.4 832.3L333.1 834.6L333.8 832.1L334.5 832.9L335.2 833.5L335.9 833.4L336.6 829.5L337.3 839.7L338.0 833.2L338.7 831.5L339.4 829.9L340.1 833.3L340.8 834.4L341.5 829.3L342.2 835.6L342.9 831.9L343.6 832.7L344.3 835.2L345.0 831.3L345.7 832.9L346.4 835.9L347.1 837.6L347.8 834.3L348.5 829.3L349.2 834.7L349.9 832.9L350.6 831.4L351.3 832.1L352.0 832.2L352.7 833.0L353.4 835.6L354.1 833.9L354.8 833.2L355.5 833.0L356.2 831.3L356.9 835.1L357.6 832.2L358.3 835.2L359.0 833.0L359.7 837.8L360.4 832.3L361.1 830.1L361.8 832.3L362.5 831.5L363.2 830.4L363.9 835.4L364.6 833.6L365.3 836.2L366.0 830.8L366.7 831.7L367.4 829.5L368.1 832.8L368.8 829.8L369.5 831.6L370.2 836.5L370.9 832.1L371.6 832.3L372.3 830.3L373.0 830.8L373.7 830.6L374.4 831.0L375.1 836.3L375.8 833.5L376.5 832.8L377.2 837.1L377.9 835.1L378.6 834.3L379.3 830.8L380.0 827.9L380.7 834.0L381.4 831.7L382.1 832.9L382.8 833.4L383.5 830.8L384.2 835.5L384.9 836.0L385.6 833.7L386.3 834.0L387.0 830.9L387.7 833.6L388.4 831.9L389.1 837.7L389.8 831.0L390.5 832.2L391.2 832.0L391.9 831.1L392.6 831.2L393.3 833.5L394.0 831.8L394.7 831.0L395.4 830.3L396.1 833.5L396.8 832.0L397.5 833.2L398.2 833.3L398.9 834.0L399.6 834.0L400.3 832.0L401.0 834.7L401.7 835.2L402.4 833.9L403.1 830.0L403.8 831.6L404.5 831.0L405.2 834.6L405.9 832.2L406.6 833.4L407.3 828.8L408.0 831.3L408.7 832.7L409.4 831.9L410.1 830.6L410.8 836.2L411.5 832.9L412.2 833.5L412.9 834.6L413.6 832.4L414.3 833.8L415.0 831.5L415.7 832.9L416.4 829.8L417.1 831.1L417.8 833.6L418.5 833.0L419.2 832.9L419.9 832.1L420.6 833.0L421.3 829.9L422.0 833.0L422.7 833.4L423.4 827.2L424.1 832.4L424.8 831.1L425.5 832.6L426.2 835.8L426.9 833.5L427.6 831.8L428.3 828.8L429.0 833.2L429.7 829.9L430.4 835.6L431.1 833.8L431.8 836.5L432.5 828.1L433.2 833.5L433.9 831.6L434.6 830.8L435.3 832.0L436.0 833.1L436.7 831.8L437.4 833.1L437.8 832.8L438.1 829.9L438.8 822.6L439.5 816.2L439.6 815.1L440.2 808.9L440.9 803.0L441.4 799.5L441.6 791.5L442.3 764.1L443.0 738.0L443.2 730.5L443.7 720.5L444.4 706.1L445.1 692.6L445.8 679.7L446.5 665.6L446.9 657.0L447.2 653.1L447.9 642.2L448.6 631.7L449.3 621.1L450.0 610.6L450.5 603.2L450.7 600.8L451.4 592.2L452.1 583.9L452.8 574.8L453.5 567.2L454.1 559.0L454.2 558.7L454.9 554.4L455.6 550.3L456.3 545.4L457.0 549.1L457.7 554.6L458.4 560.3L459.1 563.7L459.6 567.7L459.8 569.7L460.5 580.5L461.2 591.6L461.9 601.7L462.6 612.4L463.2 621.3L463.3 622.6L464.0 632.1L464.7 643.9L465.4 654.5L466.1 664.8L466.8 676.6L467.5 693.2L468.2 710.0L468.9 726.6L469.6 743.6L470.3 760.0L470.5 764.2L471.0 782.1L471.7 807.9L472.3 829.5L472.4 829.6L473.1 830.5L473.8 833.2L474.5 831.2L475.2 835.7L475.9 836.5L476.6 839.4L477.3 836.1L478.0 837.4L478.7 837.0L479.4 838.6L479.6 838.5L480.1 844.6L480.8 851.6L481.4 865.2L481.5 866.7L482.2 877.5L482.9 888.7L483.6 901.2L484.3 911.6L485.0 923.3L485.7 939.5L486.4 955.6L487.1 971.3L487.8 989.2L488.5 1004.9L488.6 1007.1L489.2 1018.3L489.9 1031.7L490.6 1046.1L491.3 1060.9L492.0 1074.8L492.3 1081.7L492.7 1084.7L493.4 1094.9L494.1 1105.6L494.8 1115.2L495.5 1125.1L495.9 1130.0L496.2 1133.6L496.9 1140.9L497.6 1148.4L497.7 1150.2L498.3 1144.0L499.0 1136.4L499.7 1127.0L500.4 1119.4L501.1 1112.2L501.4 1108.4L501.8 1101.9L502.5 1090.8L503.2 1080.3L503.9 1068.0L504.6 1056.5L505.0 1049.4L505.3 1039.2L506.0 1013.8L506.7 988.4L506.8 985.0L507.4 946.5L508.1 900.9L508.6 869.7L508.8 860.4L509.5 829.2L509.7 820.5L510.2 818.9L510.9 817.3L511.6 815.7L512.2 813.7L512.3 815.4L513.0 826.8L513.7 838.2L514.0 843.7L514.4 842.1L515.1 838.5L515.8 834.7L516.5 831.0L517.2 827.7L517.7 825.4L517.9 825.4L518.6 826.9L519.3 828.8L520.0 831.3L520.7 832.9L521.3 834.4L521.4 834.5L522.1 833.5L522.8 831.8L523.5 831.0L524.2 829.9L524.9 829.1L525.0 829.1L525.6 831.5L526.3 833.0L527.0 835.2L527.7 837.6L528.4 839.6L529.1 841.1L529.8 843.3L530.4 845.4L530.5 844.7L531.2 841.1L531.9 836.7L532.6 832.8L533.3 829.6L534.0 824.6L534.7 828.3L535.4 829.9L536.1 829.9L536.8 831.1L537.5 833.1L538.0 835.0L538.2 835.3L538.9 835.1L539.6 833.6L540.3 834.8L541.0 834.8L541.7 833.8L542.4 833.8L543.1 834.0L543.8 833.2L544.5 832.2L545.0 832.5L545.2 833.1L545.9 832.8L546.6 835.4L547.3 831.2L548.0 830.1L548.7 838.4L549.4 832.5L550.1 836.1L550.8 834.4L551.5 830.2L552.2 833.0L552.9 830.4L553.6 834.0L554.3 834.9L555.0 839.4L555.7 834.1L556.4 833.8L557.1 829.9L557.8 835.0L558.5 826.8L559.2 832.6L559.9 829.9L560.6 831.5L561.3 832.8L562.0 834.6L562.7 830.3L563.4 826.7L564.1 831.5L564.8 831.1L565.5 833.6L566.2 831.8L566.9 833.2L567.6 832.0L568.3 833.4L569.0 830.0L569.7 832.3L570.4 833.7L571.1 832.9L571.8 836.1L572.5 834.6L573.2 833.7L573.9 829.6L574.6 835.5L575.3 831.0L576.0 833.0L576.7 836.8L577.4 833.6L578.1 830.9L578.8 833.6L579.5 832.5L580.2 832.1L580.9 831.5L581.6 832.7L582.3 829.0L583.0 835.3L583.7 833.7L584.4 830.9L585.1 840.2L585.8 837.1L586.5 832.2L587.2 831.2L587.9 828.7L588.6 833.9L589.3 831.6L590.0 830.8L590.7 835.6L591.4 828.4L592.1 830.7L592.8 834.1L593.5 830.1L594.2 835.2L594.9 834.8L595.6 834.3L596.3 834.3L597.0 839.2L597.7 832.1L598.4 838.0L599.1 835.3L599.8 829.8L600.5 831.6L601.2 833.9L601.9 832.5L602.6 835.0L603.3 831.3L604.0 833.2L604.7 835.7L605.4 832.0L606.1 833.2L606.8 834.1L607.5 830.1L608.2 833.9L608.9 829.8L609.6 828.8L610.3 836.0L611.0 830.9L611.7 830.0L612.4 829.1L613.1 829.3L613.8 832.9L614.5 830.5L615.2 833.8L615.9 830.9L616.6 833.5L617.3 832.0L618.0 832.8L618.7 832.3L619.4 828.3L620.1 833.1L620.8 834.2L621.5 834.1L622.2 831.4L622.9 833.1L623.6 830.9L624.3 835.3L625.0 829.6L625.7 829.4L626.4 833.6L627.1 831.4L627.8 831.4L628.5 834.0L629.2 836.6L629.9 830.3L630.6 832.9L631.3 833.2L632.0 834.1L632.7 835.1L633.4 831.8L634.1 833.9L634.8 836.8L635.5 833.6L636.2 832.6L636.9 834.6L637.6 835.9L638.3 832.5L639.0 832.6L639.7 835.1L640.4 832.4L641.1 832.6L641.8 834.4L642.5 830.0L643.2 835.5L643.9 833.7L644.6 835.2L645.3 837.1L646.0 834.3L646.7 832.9L647.4 833.4L648.1 832.2L648.8 833.7L649.5 831.4L650.2 832.7L650.9 830.8L651.6 832.9L652.3 834.5L653.0 834.9L653.7 835.8L654.4 833.0L655.1 836.5L655.8 833.3L656.5 833.7L657.2 836.9L657.9 833.4L658.6 830.3L659.3 832.8L660.0 829.7L660.7 829.3L661.4 831.6L662.1 834.1L662.8 831.9L663.5 836.2L664.2 833.7L664.9 832.3L665.6 833.5L666.3 831.2L667.0 830.9L667.7 831.3L668.4 831.3L669.1 832.3L669.8 833.3L670.5 830.6L671.2 835.8L671.9 833.1L672.6 835.8L673.3 834.9L674.0 833.1L674.7 835.5L675.4 833.9L676.1 837.7L676.8 832.4L677.5 833.0L678.2 833.7L678.9 832.6L679.6 836.3L680.3 836.0L681.0 833.5L681.7 834.3L682.4 832.0L683.1 828.7L683.8 827.1L684.5 834.5L685.2 836.7L685.9 836.3L686.6 831.6L687.3 832.4L688.0 833.7L688.7 834.5L689.4 832.4L690.1 829.8L690.8 835.6L691.5 831.0L692.2 835.1L692.9 834.9L693.6 832.5L694.3 830.6L695.0 831.3L695.7 832.9L696.4 828.1L697.1 836.1L697.8 833.3L698.5 829.6L699.2 832.9L699.9 835.5L700.6 834.9L701.3 832.9L702.0 837.2L702.7 829.5L703.4 838.4L704.1 831.7L704.8 833.5L705.5 832.9L706.2 828.0L706.9 834.8L707.6 830.9L708.3 831.4L709.0 834.8L709.7 833.0L710.4 832.3L711.1 831.4L711.8 833.9L712.5 833.9L713.2 834.8L713.9 832.2L714.6 836.7L715.3 830.8L716.0 833.4L716.7 835.9L717.4 836.1L718.1 834.1L718.8 827.8L719.5 831.8L720.2 838.1L720.9 832.0L721.6 834.5L722.3 836.7L723.0 835.8L723.7 832.0L724.4 834.8L725.1 835.0L725.8 835.3L726.5 833.1L727.2 835.9L727.9 834.3L728.6 825.9L729.3 829.9L730.0 833.1L730.7 833.5L731.4 830.1L732.1 838.9L732.8 834.7L733.5 830.1L734.2 833.9L734.9 829.0L735.6 835.5L736.3 835.3L737.0 832.6L737.7 833.1L738.4 831.2L739.1 831.6L739.8 833.1L740.5 835.3L741.2 833.7L741.9 831.7L742.6 834.2L743.3 833.3L744.0 834.3L744.7 835.8L745.4 834.5L746.1 830.2L746.8 831.4L747.5 834.1L748.2 834.3L748.9 834.0L749.6 833.6L750.3 833.0L751.0 831.6L751.7 828.2L752.4 837.1L753.1 832.1L753.8 834.4L754.5 831.5L755.2 828.0L755.9 832.6L756.6 836.0L757.3 832.8L758.0 834.0L758.7 831.7L759.4 837.6L760.1 835.2L760.8 836.0L761.5 832.6L762.2 833.6L762.9 834.2L763.6 835.3L764.3 835.3L765.0 835.4L765.7 831.5L766.4 831.4L767.1 834.3L767.8 834.2L768.5 829.4L769.2 833.5L769.9 833.7L770.6 830.3L771.3 839.2L772.0 833.7L772.7 829.6L773.4 832.0L774.1 834.1L774.8 831.8L775.5 833.2L776.2 832.9L776.9 830.5L777.6 839.5L778.3 833.6L779.0 829.3L779.7 835.9L780.4 830.8L781.1 831.3L781.8 832.8L782.5 834.8L783.2 835.7L783.9 836.3L784.6 834.7L785.3 834.6L786.0 832.5L786.7 830.5L787.4 832.3L788.1 837.2L788.8 830.7L789.5 832.2L790.2 833.4L790.9 833.2L791.6 831.0L792.3 835.9L793.0 831.9L793.7 832.0L794.4 834.5L795.1 834.2L795.8 831.1L796.5 830.8L797.2 834.8L797.9 832.3L798.6 834.6L799.3 833.2L800.0 835.1L800.7 832.7L801.4 833.1L802.1 836.5L802.8 831.9L803.5 833.2L804.2 835.9L804.9 833.9L805.6 834.9L806.3 835.9L807.0 835.3L807.7 835.0L808.4 833.0L809.1 835.5L809.8 834.1L810.5 833.9L811.2 832.1L811.9 834.8L812.6 835.0L813.3 831.4L814.0 833.4L814.7 833.2L815.4 834.5L816.1 834.7L816.8 833.3L817.5 832.9L818.2 837.5L818.9 833.8L819.6 835.8L820.3 837.3L821.0 841.2L821.7 834.8L822.4 833.6L823.1 833.8L823.8 832.2L824.5 832.3L825.2 835.5L825.9 833.3L826.6 831.7L827.3 834.6L828.0 835.9L828.7 833.4L829.4 830.5L830.1 835.3L830.8 832.6L831.5 830.1L832.2 836.7L832.9 833.3L833.6 840.0L834.3 833.7L835.0 835.5L835.7 833.9L836.4 832.6L837.1 831.6L837.8 833.8L838.5 831.4L839.2 831.4L839.9 833.8L840.6 833.5L841.3 831.9L842.0 832.8L842.7 832.0L843.4 834.0L844.1 831.8L844.8 833.3L845.5 833.4L846.2 837.6L846.9 835.4L847.6 833.2L848.3 830.6L849.0 836.6L849.7 836.4L850.4 834.2L851.1 836.0L851.8 831.5L852.5 833.9L853.2 838.0L853.9 833.1L854.6 831.7L855.3 835.6L856.0 832.8L856.7 836.6L857.4 830.9L858.1 833.8L858.8 838.0L859.5 833.9L860.2 835.8L860.9 830.1L861.6 831.3L862.3 835.8L863.0 832.1L863.7 834.7L864.4 834.2L865.1 833.2L865.8 831.1L866.5 832.7L867.2 835.1L867.9 832.4L868.6 833.7L869.3 837.7L870.0 838.0L870.7 832.8L871.4 833.6L872.1 834.4L872.8 829.0L873.5 830.3L874.2 833.0L874.9 832.7L875.6 833.1L876.3 831.8L877.0 831.6L877.7 834.9L878.4 832.9L879.1 835.0L879.8 834.3L880.5 832.7L881.2 835.1L881.9 831.9L882.6 836.6L883.3 836.0L884.0 835.8L884.7 831.5L885.4 835.4L886.1 834.6L886.8 833.3L887.5 835.8L888.2 834.8L888.9 832.4L889.6 834.3L890.3 834.6L891.0 837.5L891.7 828.7L892.4 831.8L893.1 832.6L893.8 830.8L894.5 836.1L895.2 831.6L895.9 829.2L896.6 832.7L897.3 834.6L898.0 834.7L898.7 836.0L899.4 834.0L900.1 832.9L900.8 832.0L901.5 831.5L902.2 833.3L902.9 835.5L903.6 834.4L904.3 831.9L905.0 829.1L905.7 835.1L906.4 835.2L907.1 837.5L907.8 836.8L908.5 834.9L909.2 833.3L909.9 830.6L910.6 833.4L911.3 833.5L912.0 832.0L912.7 834.0L913.4 834.0L914.1 832.9L914.8 830.4L915.5 834.6L916.2 835.1L916.9 832.6L917.6 830.4L918.3 835.0L919.0 833.9L919.7 836.3L920.4 837.6L921.1 834.3L921.8 835.5L922.5 831.9L923.2 830.7L923.9 830.8L924.6 835.4L925.3 839.9L926.0 837.3L926.7 829.6L927.4 830.0L928.1 833.8L928.8 834.0L929.5 833.8L930.2 837.6L930.9 833.9L931.6 836.7L932.3 833.8L933.0 836.4L933.7 836.9L934.4 836.6L935.1 833.7L935.8 828.6L936.5 837.4L937.2 836.3L937.9 835.0L938.6 835.1L939.3 833.5L940.0 834.1L940.7 834.8L941.4 833.3L942.1 837.3L942.8 831.3L943.5 833.9L944.2 833.6L944.9 833.0L945.6 834.1L946.3 833.0L947.0 835.0L947.7 834.8L948.4 833.8L948.9 833.9L949.1 830.0L949.8 820.9L950.5 810.3L950.7 806.6L951.2 799.4L951.9 788.5L952.5 777.7L952.6 774.5L953.3 748.2L954.0 734.6L954.7 721.7L955.4 709.1L956.1 696.0L956.2 693.0L956.8 682.9L957.5 667.8L958.2 654.0L958.9 639.0L959.6 624.7L959.8 621.6L960.3 615.0L961.0 603.9L961.7 593.2L962.4 583.2L963.1 572.1L963.5 566.0L963.8 565.9L964.5 562.3L965.2 557.3L965.9 554.0L966.4 550.3L966.6 550.2L967.3 552.2L968.0 555.0L968.7 556.5L968.9 556.6L969.4 562.2L970.1 571.3L970.8 580.3L971.5 589.6L972.2 599.9L972.5 603.3L972.9 609.3L973.6 618.9L974.3 630.1L975.0 639.9L975.7 650.8L976.2 658.6L976.4 662.7L977.1 675.1L977.8 690.5L978.5 704.1L979.2 718.8L979.8 731.1L979.9 733.8L980.6 759.8L981.3 785.1L981.6 797.6L982.0 807.9L982.7 825.7L983.4 844.1L984.1 844.4L984.8 843.3L985.5 838.6L986.2 838.8L986.9 836.3L987.0 838.8L987.6 838.6L988.3 837.0L989.0 833.8L989.7 835.5L990.4 836.9L991.1 836.4L991.8 837.7L992.5 839.4L993.2 836.1L993.9 838.8L994.6 837.1L995.3 835.2L996.0 836.1L996.7 833.6L997.4 838.2L998.1 838.0L998.8 833.6L999.5 837.4L1000.2 833.5L1000.9 840.1L1001.6 835.0L1002.3 834.7L1003.0 833.1L1003.4 836.6L1003.7 833.7L1004.4 835.9L1005.1 836.0L1005.8 833.5L1006.5 834.5L1007.2 835.3L1007.9 832.0L1008.6 831.9L1009.3 836.5L1010.0 834.1L1010.7 835.5L1011.4 835.0L1012.1 834.2L1012.8 833.6L1013.5 834.8L1014.2 833.9L1014.9 835.0L1015.6 833.3L1016.3 831.9L1017.0 838.7L1017.7 830.8L1018.4 831.2L1019.1 834.7L1019.8 833.7L1020.5 828.9L1021.2 832.7L1021.9 832.8L1022.6 835.5L1023.3 830.8L1023.4 833.5L1024.0 837.2L1024.7 841.9L1025.4 846.8L1025.9 851.0L1026.1 855.2L1026.8 867.7L1027.5 881.9L1028.2 894.0L1028.8 905.2L1028.9 906.9L1029.6 927.9L1030.3 947.4L1031.0 966.8L1031.4 978.9L1031.7 984.1L1032.4 998.3L1033.1 1011.5L1033.8 1025.5L1034.3 1035.4L1034.5 1039.6L1035.2 1053.1L1035.9 1066.8L1036.6 1082.2L1037.3 1096.1L1037.9 1107.4L1038.0 1108.8L1038.7 1116.2L1039.4 1123.3L1040.1 1130.4L1040.5 1132.9L1040.8 1136.3L1041.5 1141.8L1042.2 1146.6L1042.3 1147.1L1042.9 1143.1L1043.6 1137.1L1044.1 1134.0L1044.3 1130.9L1045.0 1118.1L1045.7 1107.7L1046.4 1096.6L1047.0 1087.0L1047.1 1085.6L1047.8 1070.8L1048.5 1056.6L1049.2 1042.1L1049.9 1027.6L1050.6 1014.5L1051.3 973.7L1052.0 934.4L1052.5 905.5L1052.7 894.2L1053.4 860.9L1054.1 827.4L1054.3 818.4L1054.8 816.9L1055.5 815.2L1056.2 814.2L1056.9 812.2L1057.2 811.0L1057.6 816.8L1058.3 826.2L1059.0 835.4L1059.7 844.7L1060.4 841.1L1061.1 838.1L1061.8 833.1L1062.5 829.5L1063.2 826.1L1063.3 825.2L1063.9 827.4L1064.6 829.6L1065.3 831.8L1066.0 834.4L1066.7 836.2L1067.0 837.9L1067.4 837.2L1068.1 833.7L1068.8 831.1L1069.5 828.1L1070.2 825.1L1070.6 823.9L1070.9 824.1L1071.6 827.1L1072.3 829.1L1073.0 831.2L1073.7 833.3L1074.4 835.7L1075.1 838.4L1075.8 840.7L1076.5 841.3L1077.2 845.1L1077.9 847.9L1078.6 842.7L1079.3 838.7L1080.0 833.5L1080.7 828.4L1081.4 825.7L1081.5 824.3L1082.1 825.5L1082.8 827.9L1083.5 830.2L1084.2 833.5L1084.9 835.8L1085.6 838.1L1086.3 840.8L1087.0 844.0L1087.7 840.6L1088.4 837.7L1089.1 835.6L1089.8 832.9L1090.5 829.9L1091.0 829.3L1091.2 829.3L1091.9 830.1L1092.6 832.4L1093.3 833.4L1094.0 833.9L1094.7 836.0L1095.4 836.5L1096.0 838.3L1096.1 837.3L1096.8 837.8L1097.5 836.8L1098.2 836.7L1098.9 835.7L1099.6 835.0L1100.3 831.3L1101.0 832.4L1101.7 830.0L1102.0 834.8L1102.4 833.9L1103.1 833.8L1103.8 837.6L1104.5 835.1L1105.2 833.5L1105.9 835.7L1106.6 835.2L1107.3 836.4L1108.0 834.7L1108.7 833.6L1109.4 832.3L1110.1 835.6L1110.8 831.3L1111.5 832.5L1112.2 829.9L1112.9 835.2L1113.6 835.5L1114.3 834.6L1115.0 831.6L1115.7 835.6L1116.4 833.4L1117.1 832.9L1117.8 833.6L1118.5 836.3L1119.2 832.4L1119.9 835.0L1120.6 835.6L1121.3 833.8L1122.0 835.1L1122.7 832.4L1123.4 832.3L1124.1 833.4L1124.8 836.3L1125.5 833.1L1126.2 836.6L1126.9 832.5L1127.6 833.0L1128.3 833.1L1129.0 832.8L1129.7 832.4L1130.4 831.2L1131.1 839.4L1131.8 835.5L1132.5 831.2L1133.2 836.3L1133.9 832.2L1134.6 837.8L1135.3 835.0L1136.0 826.8L1136.7 834.6L1137.4 831.3L1138.1 835.0L1138.8 833.7L1139.5 833.9L1140.2 831.0L1140.9 834.2L1141.6 833.3L1142.3 831.6L1143.0 833.6L1143.7 833.2L1144.4 833.4L1145.1 835.2L1145.8 833.7L1146.5 831.7L1147.2 833.1L1147.9 832.4L1148.6 835.5L1149.3 836.7L1150.0 829.2L1150.7 834.9L1151.4 834.5L1152.1 834.2L1152.8 830.3L1153.5 831.3L1154.2 835.1L1154.9 834.1L1155.6 835.0L1156.3 831.9L1157.0 836.1L1157.7 837.0L1158.4 835.4L1159.1 834.3L1159.8 835.6L1160.5 834.2L1161.2 832.7L1161.9 833.5L1162.6 835.5L1163.3 830.7L1164.0 835.2L1164.7 830.9L1165.4 834.1L1166.1 835.4L1166.8 834.2L1167.5 834.7L1168.2 833.9L1168.9 833.1L1169.6 833.1L1170.3 833.0L1171.0 835.7L1171.7 834.6L1172.4 833.9L1173.1 836.4L1173.8 833.9L1174.5 830.8L1175.2 834.4L1175.9 833.7L1176.6 833.5L1177.3 832.2L1178.0 833.1L1178.7 832.9L1179.4 833.3L1180.1 835.9L1180.8 831.4L1181.5 835.2L1182.2 832.0L1182.9 833.8L1183.6 833.1L1184.3 832.1L1185.0 832.6L1185.7 831.7L1186.4 832.4L1187.1 833.6L1187.8 834.2L1188.5 838.4L1189.2 839.5L1189.9 831.0L1190.6 836.6L1191.3 833.6L1192.0 831.4L1192.7 833.8L1193.4 839.3L1194.1 832.6L1194.8 837.1L1195.5 834.6L1196.2 832.2L1196.9 836.6L1197.6 830.3L1198.3 832.0L1199.0 830.9L1199.7 834.9L1200.4 838.6L1201.1 833.5L1201.8 830.7L1202.5 833.2L1203.2 833.3L1203.9 835.0L1204.6 832.9L1205.3 834.9L1206.0 835.7L1206.7 834.1L1207.4 835.2L1208.1 833.4L1208.8 835.2L1209.5 831.3L1210.2 832.0L1210.9 830.2L1211.6 831.6L1212.3 830.5L1213.0 833.9L1213.7 833.4L1214.4 832.5L1215.1 837.3L1215.8 832.8L1216.5 834.5L1217.2 835.3L1217.9 834.7L1218.6 834.7L1219.3 835.8L1220.0 837.5L1220.7 832.4L1221.4 833.2L1222.1 832.7L1222.8 831.6L1223.5 836.0L1224.2 834.9L1224.9 839.0L1225.6 839.6L1226.3 831.0L1227.0 834.0L1227.7 836.2L1228.4 833.8L1229.1 833.5L1229.8 833.5L1230.5 832.4L1231.2 837.8L1231.9 834.3L1232.6 835.6L1233.3 833.1L1234.0 830.4L1234.7 836.0L1235.4 835.1L1236.1 833.1L1236.8 832.4L1237.5 831.8L1238.2 834.4L1238.9 836.6L1239.6 834.1L1240.3 832.6L1241.0 831.8L1241.7 834.7L1242.4 833.2L1243.1 832.1L1243.8 833.8L1244.5 835.1L1245.2 836.2L1245.9 837.2L1246.6 835.3L1247.3 832.5L1248.0 832.0L1248.7 834.9L1249.4 835.0L1250.1 832.7L1250.8 834.8L1251.5 833.4L1252.2 828.8L1252.9 835.3L1253.6 833.7L1254.3 836.7L1255.0 835.3L1255.7 832.4L1256.4 833.6L1257.1 834.8L1257.8 833.7L1258.5 835.4L1259.2 832.3L1259.9 836.0L1260.6 832.4L1261.3 833.1L1262.0 834.9L1262.7 834.2L1263.4 831.3L1264.1 833.1L1264.8 831.2L1265.5 831.7L1266.2 836.3L1266.9 832.7L1267.6 832.8L1268.3 834.4L1269.0 835.1L1269.7 829.8L1270.4 833.6L1271.1 834.2L1271.8 837.6L1272.5 832.4L1273.2 834.6L1273.9 835.5L1274.6 838.0L1275.3 833.8L1276.0 834.0L1276.7 837.2L1277.4 834.6L1278.1 830.8L1278.8 832.3L1279.5 831.8L1280.2 831.6L1280.9 832.6L1281.6 828.1L1282.3 834.0L1283.0 833.2L1283.7 832.1L1284.4 832.6L1285.1 831.6L1285.8 833.1L1286.5 835.3L1287.2 832.4L1287.9 832.2L1288.6 826.2L1289.3 834.8L1290.0 835.5L1290.7 832.9L1291.4 833.4L1292.1 837.3L1292.8 831.2L1293.5 836.1L1294.2 831.9L1294.9 834.8L1295.6 835.0L1296.3 832.8L1297.0 827.9L1297.7 833.2L1298.4 828.8L1299.1 834.4L1299.8 833.2L1300.5 832.4L1301.2 833.4L1301.9 832.2L1302.6 835.9L1303.3 833.3L1304.0 835.4L1304.7 831.9L1305.4 834.9L1306.1 833.1L1306.8 833.8L1307.5 834.2L1308.2 832.8L1308.9 834.2L1309.6 833.1L1310.3 834.1L1311.0 836.5L1311.7 835.4L1312.4 835.4L1313.1 837.6L1313.8 834.8L1314.5 830.9L1315.2 835.4L1315.9 833.3L1316.6 836.9L1317.3 837.8L1318.0 833.1L1318.7 835.6L1319.4 835.8L1320.1 834.8L1320.8 834.4L1321.5 834.2L1322.2 836.2L1322.9 834.9L1323.6 833.0L1324.3 833.6L1325.0 831.5L1325.7 833.6L1326.4 834.1L1327.1 834.8L1327.8 831.7L1328.5 835.2L1329.2 831.3L1329.9 834.8L1330.6 833.5L1331.3 833.0L1332.0 833.9L1332.7 828.5L1333.4 835.0L1334.1 835.0L1334.8 832.1L1335.5 835.1L1336.2 835.7L1336.9 833.6L1337.6 835.5L1338.3 834.0L1339.0 835.2L1339.7 834.9L1340.4 833.3L1341.1 834.4L1341.8 833.4L1342.5 833.5L1343.2 835.6L1343.9 834.0L1344.6 833.7L1345.3 830.9L1346.0 832.4L1346.7 832.4L1347.4 831.4L1348.1 832.4L1348.8 832.5L1349.5 831.6L1350.2 828.5L1350.9 834.1L1351.6 833.5L1352.3 835.1L1353.0 832.5L1353.7 834.6L1354.4 836.3L1355.1 835.7L1355.8 833.9L1356.5 834.5L1357.2 831.7L1357.9 835.3L1358.6 836.2L1359.3 834.7L1360.0 832.5L1360.7 834.5L1361.4 834.1L1362.1 832.0L1362.8 833.0L1363.5 830.6L1364.2 833.6L1364.9 834.2L1365.6 833.7L1366.3 833.1L1367.0 833.5L1367.7 834.0L1368.4 833.9L1369.1 834.4L1369.8 833.2L1370.5 830.1L1371.2 835.6L1371.9 834.6L1372.6 834.1L1373.3 834.7L1374.0 833.3L1374.7 836.1L1375.4 832.9L1376.1 832.9L1376.8 835.8L1377.5 833.3L1378.2 831.0L1378.9 837.9L1379.6 835.9L1380.3 832.7L1381.0 829.9L1381.7 835.8L1382.4 832.0L1383.1 836.3L1383.8 834.3L1384.5 834.8L1385.2 835.0L1385.9 831.8L1386.6 831.7L1387.3 834.8L1388.0 832.9L1388.7 835.5L1389.4 834.3L1390.1 838.0L1390.8 834.2L1391.5 832.7L1392.2 834.5L1392.9 832.6L1393.6 835.5L1394.3 834.1L1395.0 831.5L1395.7 834.8L1396.4 836.8L1397.1 835.6L1397.8 834.4L1398.5 830.2L1399.2 834.5L1399.9 833.8L1400.6 834.5L1401.3 830.7L1402.0 836.7L1402.7 835.7L1403.4 833.4L1404.1 837.6L1404.8 833.9L1405.5 832.7L1406.2 834.2L1406.9 831.2L1407.6 831.4L1408.3 834.6L1409.0 832.7L1409.7 837.3L1410.4 833.0L1411.1 831.8L1411.8 831.1L1412.5 830.1L1413.2 833.9L1413.9 834.6L1414.6 833.5L1415.3 834.4L1416.0 833.4L1416.7 837.2L1417.4 832.7L1418.1 833.1L1418.8 836.3L1419.5 833.5L1420.2 832.7L1420.9 832.7L1421.6 835.5L1422.3 837.8L1423.0 834.5L1423.7 836.2L1424.4 832.3L1425.1 832.8L1425.8 834.7L1426.5 836.9L1427.2 832.3L1427.9 835.4L1428.6 829.6L1429.3 837.0L1430.0 832.8L1430.7 834.8L1431.4 833.4L1432.1 833.2L1432.8 832.5L1433.5 832.9L1434.2 832.4L1434.9 835.1L1435.6 831.4L1436.3 831.5L1437.0 835.6L1437.7 833.0L1438.4 833.1L1439.1 835.7L1439.8 831.6L1440.5 835.0L1441.2 833.7L1441.9 835.1L1442.6 831.7L1443.3 833.6L1444.0 831.9L1444.7 833.8L1445.4 832.5L1446.1 834.3L1446.8 835.9L1447.5 839.5L1448.2 838.4L1448.9 833.7L1449.6 836.8L1450.3 836.3L1451.0 835.4L1451.7 836.8L1452.4 835.6L1453.1 832.2L1453.8 834.3L1454.5 832.6L1455.2 832.3L1455.9 834.4L1456.6 833.8L1457.3 835.3L1458.0 830.6L1458.7 832.6L1459.4 838.4L1460.1 832.6L1460.8 831.9L1461.5 831.5L1462.2 835.8L1462.9 836.4L1463.6 835.7L1464.3 834.7L1465.0 834.8L1465.7 833.2L1466.4 830.9L1467.1 828.8L1467.8 836.5L1468.5 834.8L1469.2 833.7L1469.9 832.6L1470.6 833.3L1471.3 836.6L1472.0 833.2L1472.7 836.3L1473.4 833.7L1474.1 831.9L1474.8 833.2L1475.5 832.6L1476.2 835.7L1476.9 832.0L1477.6 834.7L1478.3 832.4L1479.0 837.8L1479.7 831.2L1480.4 832.8L1481.1 838.5L1481.8 834.7L1482.5 830.2L1483.2 832.2L1483.9 833.4L1484.6 834.7L1485.3 833.9L1486.0 832.7L1486.7 833.1L1487.4 828.7L1488.1 836.0L1488.8 834.4L1489.5 838.1L1490.2 831.4L1490.9 832.2L1491.6 832.4L1492.3 832.7L1493.0 835.8L1493.7 833.8L1494.4 833.7L1495.1 832.8L1495.8 834.8L1496.5 834.3L1497.2 832.3L1497.9 836.4L1498.6 833.0L1499.3 831.0L1500.0 834.9L1500.7 833.7L1501.4 832.8L1502.1 831.4L1502.8 830.8L1503.5 832.4L1504.2 833.6L1504.9 831.8L1505.6 833.5L1506.3 834.7L1507.0 835.1L1507.7 835.5L1508.4 835.5L1509.1 835.6L1509.8 835.4L1510.5 833.4L1511.2 833.0L1511.9 833.1L1512.6 834.6L1513.3 836.4L1514.0 832.6L1514.7 833.1L1515.4 834.1L1516.1 833.0L1516.8 831.8L1517.5 832.7L1518.2 835.9L1518.9 834.2L1519.6 834.8L1520.3 833.8L1521.0 838.3L1521.7 833.5L1522.4 833.4L1523.1 836.4L1523.8 832.3L1524.5 834.2L1525.2 830.2L1525.9 834.9L1526.6 831.3L1527.3 834.8L1528.0 834.5L1528.7 832.6L1529.4 834.5L1530.1 831.8L1530.8 835.5L1531.5 834.2L1532.2 836.4L1532.9 832.0L1533.6 836.8L1534.3 834.0L1535.0 833.3L1535.7 831.9L1536.4 831.7L1537.1 834.7L1537.8 832.4L1538.5 834.4L1539.2 834.1L1539.9 834.2L1540.6 833.0L1541.3 831.5L1542.0 835.5L1542.7 833.2L1543.4 830.8L1544.1 830.4L1544.8 836.3L1545.5 837.8L1546.2 835.5L1546.9 835.2L1547.6 831.9L1548.3 830.5L1549.0 831.2L1549.7 833.6L1550.4 838.6L1551.1 835.8L1551.8 833.1L1552.5 834.8L1553.2 835.8L1553.9 835.6L1554.6 831.6L1555.3 829.7L1556.0 828.3L1556.7 829.6L1557.4 830.7L1558.1 833.9L1558.8 834.9L1559.5 830.4L1560.2 836.3L1560.9 832.5L1561.6 834.0L1562.3 827.7L1563.0 839.0L1563.7 835.4L1564.4 834.0L1565.1 834.9L1565.8 830.3L1566.5 835.3L1567.2 832.2L1567.9 832.9L1568.6 833.1L1569.3 833.7L1570.0 831.2L1570.7 836.0L1571.4 836.1L1572.1 831.5L1572.8 833.5L1573.5 831.4L1574.2 836.8L1574.9 832.1L1575.6 833.6L1576.3 836.0L1577.0 834.2L1577.7 837.9L1578.4 833.1L1579.1 836.9L1579.8 832.8L1580.5 830.4L1581.2 834.9L1581.9 836.3L1582.6 835.7L1583.3 834.5L1584.0 835.5L1584.7 837.2L1585.4 835.1L1586.1 833.9L1586.8 834.1L1587.5 833.3L1588.2 835.8L1588.9 838.6L1589.6 836.9L1590.3 832.4L1591.0 833.1L1591.7 835.0L1592.4 833.6L1593.1 834.7L1593.8 834.1L1594.5 834.7L1595.2 833.4L1595.9 839.9L1596.6 833.8L1597.3 831.2L1598.0 836.2L1598.7 830.1L1599.4 835.4L1600.1 834.9L1600.8 838.6L1601.5 836.5L1602.2 838.3L1602.9 834.9L1603.6 835.3L1604.3 842.4L1605.0 831.3L1605.7 839.0L1606.4 833.6L1607.1 832.1L1607.8 833.5L1608.5 833.2L1609.2 834.3L1609.9 833.4L1610.6 837.3L1611.3 839.1L1612.0 834.7L1612.7 833.6L1613.4 835.2L1614.1 834.2L1614.8 837.2L1615.5 836.5L1616.2 831.7L1616.9 832.8L1617.6 837.7L1618.3 836.5L1619.0 830.0L1619.7 832.3L1620.4 829.0L1621.1 834.7L1621.8 834.3L1622.5 833.0L1623.2 834.1L1623.9 833.3L1624.6 830.8L1625.3 831.9L1626.0 832.1L1626.7 832.5L1627.4 836.2L1628.1 834.0L1628.8 833.0L1629.5 829.4L1630.2 835.4L1630.9 830.1L1631.6 832.4L1632.3 833.2L1633.0 834.6L1633.7 834.3L1634.4 835.3L1635.1 834.8L1635.8 831.9L1636.5 839.7L1637.2 835.3L1637.9 836.6L1638.6 833.1L1639.3 836.0L1640.0 836.5L1640.7 839.2L1641.4 836.7L1642.1 832.2L1642.8 832.6L1643.5 834.0L1644.2 832.4L1644.9 833.8L1645.6 834.5L1646.3 836.4L1647.0 837.0L1647.7 832.9L1648.4 833.5L1649.1 836.0L1649.8 833.6L1650.5 833.2L1651.2 834.0L1651.9 833.5L1652.6 830.4L1653.3 833.5L1654.0 835.3L1654.7 833.6L1655.4 834.0L1656.1 833.1L1656.8 834.2L1657.5 834.1L1658.2 835.9L1658.9 834.3L1659.6 836.3L1660.3 833.9L1661.0 834.0L1661.7 835.3L1662.4 839.1L1663.1 835.6L1663.8 835.4L1664.5 835.4L1665.2 832.0L1665.9 833.1L1666.6 834.2L1667.3 837.5L1668.0 835.7L1668.7 836.0L1669.4 833.8L1670.1 832.7L1670.8 832.4L1671.5 835.4L1672.2 836.4L1672.9 836.4L1673.6 832.6L1674.3 832.3L1675.0 831.9L1675.7 833.7L1676.4 836.1L1677.1 833.9L1677.8 832.8L1678.5 833.2L1679.2 831.8L1679.9 835.9L1680.6 836.3L1681.3 837.4L1682.0 832.9L1682.7 835.1L1683.4 833.7L1684.1 831.7L1684.8 833.8L1685.5 828.9L1686.2 836.9L1686.9 831.6L1687.6 830.0L1688.3 836.6L1689.0 834.9L1689.7 835.6L1690.4 833.6L1691.1 834.3L1691.8 836.3L1692.5 834.9L1693.2 837.9L1693.9 828.3L1694.6 833.3L1695.3 832.4L1696.0 831.2L1696.7 835.0L1697.4 833.2L1698.1 833.4L1698.8 831.8L1699.5 833.9L1700.2 835.3L1700.9 830.1L1701.6 834.2L1702.3 833.3L1703.0 833.3L1703.7 833.8L1704.4 839.1L1705.1 831.6L1705.8 835.9L1706.5 834.4L1707.2 837.3L1707.9 837.0L1708.6 834.7L1709.3 836.1L1710.0 834.1L1710.7 838.3L1711.4 833.3L1712.1 831.8L1712.8 831.4L1713.5 833.3L1714.2 836.2L1714.9 834.6L1715.6 832.9L1716.3 834.7L1717.0 832.8L1717.7 834.4L1718.4 835.2L1719.1 837.3L1719.8 831.6L1720.5 833.4L1721.2 835.2L1721.9 836.3L1722.6 835.3L1723.3 834.1L1724.0 834.2L1724.7 831.1L1725.4 833.5L1726.1 835.6L1726.8 833.8L1727.5 832.6L1728.2 834.1L1728.9 835.6L1729.6 834.7L1730.3 831.7L1731.0 834.0L1731.7 835.0L1732.4 833.2L1733.1 832.8L1733.8 834.8L1734.5 836.5L1735.2 835.0L1735.9 831.3L1736.6 832.9L1737.3 833.3L1738.0 835.2L1738.7 832.2L1739.4 830.9L1740.1 833.2L1740.8 835.1L1741.5 836.1L1742.2 834.4L1742.9 835.5L1743.6 833.1L1744.3 837.2L1745.0 831.4L1745.7 834.1L1746.4 834.1L1747.1 837.3L1747.8 833.4L1748.5 832.3L1749.2 833.8L1749.9 836.6L1750.6 834.8L1751.3 832.7L1752.0 832.7L1752.7 835.6L1753.4 835.5L1754.1 833.1L1754.8 832.1L1755.5 835.7L1756.2 834.4L1756.9 834.1L1757.6 834.2L1758.3 829.0L1759.0 833.2L1759.7 833.6L1760.4 833.7L1761.1 836.7L1761.8 833.5L1762.5 838.4L1763.2 833.4L1763.9 840.7L1764.6 836.9L1765.3 828.9L1766.0 835.0L1766.7 836.1L1767.4 833.4L1768.1 837.1L1768.8 831.7L1769.5 836.0L1770.2 837.3L1770.9 832.6L1771.6 833.5L1772.3 833.0L1773.0 835.7L1773.7 833.6L1774.4 837.5L1775.1 833.8L1775.8 834.4L1776.5 834.3L1777.2 834.4L1777.9 838.1L1778.6 832.2L1779.3 834.3L1780.0 829.5L1780.7 835.6L1781.4 835.9L1782.1 835.4L1782.8 835.4L1783.5 834.7L1784.2 832.8L1784.9 828.4L1785.6 834.5L1786.3 833.0L1787.0 834.4L1787.7 833.4L1788.4 835.2L1789.1 836.1L1789.8 831.7L1790.5 839.4L1791.2 835.7L1791.9 832.6L1792.6 829.8L1793.3 835.7L1794.0 831.0L1794.7 833.0L1795.4 834.1L1796.1 833.3L1796.8 832.6L1797.5 836.3L1798.2 830.6L1798.9 832.7L1799.6 834.7L1800.3 835.8L1801.0 835.9L1801.7 833.6L1802.4 838.5L1803.1 833.7L1803.8 836.2L1804.5 831.7L1805.2 837.1L1805.9 836.3L1806.6 833.2L1807.3 836.3L1808.0 835.1L1808.7 835.4L1809.4 834.2L1810.1 836.2L1810.8 837.4L1811.5 833.4L1812.2 830.3L1812.9 832.8L1813.6 835.0L1814.3 836.1L1815.0 828.7L1815.7 831.3L1816.4 832.3L1817.1 836.1L1817.8 831.9L1818.5 833.2L1819.2 834.5L1819.9 835.3L1820.6 837.8L1821.3 835.1L1822.0 834.9L1822.7 834.9L1823.4 837.4L1824.1 835.9L1824.8 831.2L1825.5 836.4L1826.2 832.6L1826.9 832.7L1827.6 835.5L1828.3 830.8L1829.0 835.9L1829.7 832.3L1830.4 833.6L1831.1 833.5L1831.8 830.8L1832.5 831.7L1833.2 833.7L1833.9 836.5L1834.6 833.7L1835.3 832.3L1836.0 830.9L1836.7 833.9L1837.4 833.6L1838.1 834.3L1838.8 831.1L1839.5 832.4L1840.2 832.2L1840.9 833.0L1841.6 832.6L1842.3 835.2L1843.0 831.3L1843.7 830.4L1844.4 831.5L1845.1 834.1L1845.8 833.9L1846.5 827.8L1847.2 833.3L1847.9 834.7L1848.6 837.6L1849.3 836.2L1850.0 833.8L1850.7 835.0L1851.4 836.0L1852.1 833.8L1852.8 832.5L1853.5 831.0L1854.2 830.7L1854.9 840.1L1855.6 837.0L1856.3 833.2L1857.0 834.3L1857.7 832.2L1858.4 836.8L1859.1 834.8L1859.8 834.7L1860.5 831.4L1861.2 835.8L1861.9 832.1L1862.6 830.2L1863.3 833.0L1864.0 834.4L1864.7 836.2L1865.4 832.8L1866.1 833.5L1866.8 829.9L1867.5 834.0L1868.2 832.4L1868.9 834.8L1869.6 833.0L1870.3 833.9L1871.0 836.4L1871.7 838.4L1872.4 835.3L1873.1 835.2L1873.8 831.8L1874.5 833.0L1875.2 836.0L1875.9 833.0L1876.6 833.0L1877.3 834.0L1878.0 832.1L1878.7 835.5L1879.4 834.8L1880.1 833.9L1880.8 832.9L1881.5 833.5L1882.2 836.2L1882.9 835.2L1883.6 835.3L1884.3 835.8L1885.0 832.5L1885.7 834.1L1886.4 838.6L1887.1 835.8L1887.8 836.4L1888.5 834.4L1889.2 834.2L1889.9 831.4L1890.6 834.6L1891.3 837.1L1892.0 836.3L1892.7 834.1L1893.4 829.6L1894.1 836.1L1894.8 833.1L1895.5 835.4L1896.2 835.1L1896.9 834.6L1897.6 834.0L1898.3 835.2L1899.0 836.9L1899.7 832.3L1900.4 833.7L1901.1 834.1L1901.8 834.3L1902.5 838.3L1903.2 832.5L1903.9 835.0L1904.6 837.6L1905.3 833.1L1906.0 831.6L1906.7 834.9L1907.4 834.2L1908.1 836.4L1908.8 834.1L1909.5 834.6L1910.2 834.7L1910.9 834.5L1911.6 835.4L1912.3 833.5L1913.0 832.2L1913.7 832.7L1914.4 835.7L1915.1 835.4L1915.8 829.1L1916.5 837.5L1917.2 837.8L1917.9 835.3L1918.6 836.3L1919.3 834.1L1920.0 834.7L1920.7 837.8L1921.4 832.2L1922.1 831.9L1922.8 834.2L1923.5 833.9L1924.2 836.1L1924.9 835.8L1925.6 831.9L1926.3 833.3L1927.0 833.2L1927.7 834.2L1928.4 832.9L1929.1 836.1L1929.8 836.5L1930.5 833.0L1931.2 833.8L1931.9 834.4L1932.6 836.4L1933.3 834.4L1934.0 837.6L1934.7 831.3L1935.4 833.6L1936.1 834.3L1936.8 831.9L1937.5 835.4L1938.2 833.3L1938.9 833.4L1939.6 836.4L1940.3 832.5L1941.0 831.3L1941.7 835.2L1942.4 834.0L1943.1 831.6L1943.8 832.5L1944.5 836.6L1945.2 833.1L1945.9 835.4L1946.6 835.2L1947.3 837.0L1948.0 838.2L1948.7 832.5L1949.4 835.3L1950.1 835.1L1950.8 834.5L1951.5 833.8L1952.2 834.3L1952.9 834.5L1953.6 829.9L1954.3 834.0L1955.0 833.5L1955.7 835.5L1956.4 835.6L1957.1 836.2L1957.8 834.1L1958.5 832.1L1959.2 840.1L1959.9 836.5L1960.6 836.0L1961.3 832.4L1962.0 834.0L1962.7 834.4L1963.4 835.3L1964.1 833.3L1964.8 835.4L1965.5 831.3L1966.2 833.3L1966.9 835.5L1967.6 833.7L1968.3 839.4L1969.0 832.9L1969.7 836.9L1970.4 834.8L1971.1 833.0L1971.8 836.7L1972.5 833.3L1973.2 837.4L1973.9 834.3L1974.6 833.3L1975.3 834.5L1976.0 830.2L1976.7 834.0L1977.4 832.2L1978.1 834.5L1978.8 832.8L1979.5 841.5L1980.2 835.3L1980.9 836.4L1981.6 833.7L1982.3 835.4L1983.0 840.0L1983.7 836.2L1984.4 834.4L1985.1 837.3L1985.8 832.6L1986.5 837.5L1987.2 832.0L1987.9 838.6L1988.6 834.8L1989.3 838.7L1990.0 836.1L1990.7 833.9L1991.4 833.5L1992.1 834.1L1992.8 834.2L1993.5 837.9L1994.2 836.0L1994.9 833.1L1995.6 833.7L1996.3 833.7L1997.0 832.6L1997.7 836.0L1998.4 834.5L1999.1 832.2L1999.8 834.7L2000.5 831.5L2001.2 825.2L2001.9 833.5L2002.6 834.6L2003.3 831.8L2004.0 830.8L2004.7 832.3L2005.4 835.6L2006.1 834.2L2006.8 833.8L2007.5 835.2L2008.2 836.9L2008.9 830.1L2009.6 836.2L2010.3 835.1L2011.0 837.0L2011.7 835.4L2012.4 835.2L2013.1 837.2L2013.8 832.3L2014.5 834.8L2015.2 837.2L2015.9 835.5L2016.6 832.4L2017.3 835.7L2018.0 834.0" fill="none" stroke="#2f7a3a" stroke-width="2.0" stroke-linejoin="round"/>
<path d="M235.8 1165.6L236.8 1165.0L237.8 1165.7L238.8 1165.0L239.8 1164.9L240.8 1165.7L241.8 1164.9L242.8 1165.5L243.8 1165.5L244.8 1165.4L245.8 1165.3L246.8 1165.3L247.8 1164.6L248.8 1165.5L249.8 1163.5L250.8 1165.2L251.8 1164.7L252.8 1166.1L253.8 1165.4L254.8 1165.3L255.8 1165.7L256.8 1165.7L257.8 1165.3L258.8 1164.8L259.8 1166.0L260.8 1165.5L261.8 1165.5L262.8 1164.2L263.8 1165.6L264.8 1164.6L265.8 1165.5L266.8 1164.9L267.8 1165.2L268.8 1166.3L269.8 1165.5L270.8 1165.8L271.8 1165.4L272.8 1165.7L273.8 1162.7L274.8 1163.3L275.8 1164.9L276.8 1166.2L277.8 1165.6L278.8 1165.2L279.8 1165.9L280.8 1165.3L281.8 1165.2L282.8 1165.3L283.8 1165.6L284.8 1165.6L285.8 1165.9L286.8 1165.3L287.8 1165.0L288.8 1165.9L289.8 1165.6L290.8 1165.4L291.8 1165.2L292.8 1165.2L293.8 1165.5L294.8 1165.7L295.8 1165.6L296.8 1164.9L297.8 1165.9L298.8 1165.5L299.8 1165.4L300.8 1165.5L301.8 1165.4L302.8 1165.7L303.8 1165.4L304.8 1164.9L305.8 1164.8L306.8 1166.2L307.8 1165.6L308.8 1165.4L309.8 1165.3L310.8 1165.3L311.8 1165.5L312.8 1165.5L313.8 1165.5L314.8 1165.7L315.8 1165.1L316.8 1165.6L317.8 1165.4L318.8 1163.8L319.8 1165.9L320.8 1165.7L321.8 1166.0L322.8 1165.4L323.8 1164.9L324.8 1165.4L325.8 1165.4L326.8 1165.8L327.8 1165.7L328.8 1165.8L329.8 1165.7L330.8 1165.0L331.8 1165.6L332.8 1165.7L333.8 1165.6L334.8 1165.7L335.8 1166.0L336.8 1165.3L337.8 1165.5L338.8 1165.7L339.8 1165.6L340.8 1165.5L341.8 1165.4L342.8 1166.1L343.8 1165.8L344.8 1166.1L345.8 1167.7L346.8 1166.0L347.8 1165.9L348.8 1166.2L349.8 1165.3L350.8 1165.6L351.8 1165.3L352.8 1165.9L353.8 1165.7L354.8 1165.3L355.8 1166.2L356.8 1165.8L357.8 1165.2L358.8 1165.4L359.8 1166.2L360.8 1165.9L361.8 1165.6L362.8 1164.7L363.8 1165.4L364.8 1165.3L365.8 1164.7L366.8 1167.1L367.8 1166.5L368.8 1166.4L369.8 1166.3L370.8 1166.2L371.8 1166.5L372.8 1165.1L373.8 1166.5L374.8 1165.3L375.8 1165.3L376.8 1165.8L377.8 1165.8L378.8 1166.3L379.8 1166.0L380.8 1166.2L381.8 1165.9L382.8 1164.9L383.8 1165.7L384.8 1166.0L385.8 1165.5L386.8 1166.3L387.8 1166.8L388.8 1165.4L389.8 1165.8L390.8 1165.8L391.8 1165.6L392.8 1165.5L393.8 1166.2L394.8 1166.3L395.8 1166.1L396.8 1165.7L397.8 1165.9L398.8 1166.1L399.8 1165.9L400.8 1166.1L401.8 1165.9L402.8 1166.1L403.8 1165.6L404.8 1165.3L405.8 1166.3L406.8 1165.4L407.8 1165.1L408.8 1165.9L409.8 1164.9L410.8 1166.3L411.0 1165.4L411.8 1095.4L412.0 1079.8L412.8 929.8L413.5 794.7L413.8 839.3L414.3 912.3L414.8 865.5L415.2 830.1L415.8 875.2L416.2 905.1L416.8 887.0L417.2 875.4L417.8 885.2L418.4 896.0L418.8 894.1L419.8 888.0L420.0 887.5L420.8 888.4L421.8 890.1L422.0 890.3L422.8 889.9L423.8 889.6L424.8 889.9L425.8 889.7L426.8 889.3L427.8 888.8L428.8 888.6L429.8 888.5L430.0 889.0L430.8 888.9L431.8 888.9L432.8 888.8L433.8 889.3L434.8 888.8L435.8 888.7L436.8 890.1L437.8 889.1L438.8 888.9L439.6 999.8L439.8 1052.7L440.2 1157.2L440.8 1159.8L441.5 1164.0L441.8 1163.0L442.8 1161.6L443.2 1162.4L443.8 1162.2L444.8 1161.9L445.8 1162.4L446.8 1161.7L447.8 1161.3L448.8 1161.6L449.8 1161.4L450.8 1160.8L451.8 1161.1L452.8 1160.3L453.8 1159.5L454.8 1159.6L455.8 1160.4L456.0 1160.3L456.8 1159.4L457.8 1160.2L458.8 1160.7L459.8 1161.3L460.8 1160.8L461.8 1162.3L462.8 1162.6L463.8 1162.6L464.8 1163.9L465.8 1165.3L466.8 1164.4L467.8 1164.5L468.8 1165.0L469.8 1165.2L470.8 1165.3L471.8 1165.3L472.3 1165.4L472.8 1165.9L473.8 1165.8L474.8 1166.1L475.8 1165.8L476.8 1167.0L477.8 1165.7L478.8 1167.2L479.8 1166.7L480.8 1166.7L481.8 1166.5L482.8 1167.9L483.8 1167.2L484.8 1166.3L485.8 1166.9L486.8 1168.4L487.8 1168.1L488.8 1167.6L489.8 1167.8L490.8 1167.5L491.8 1167.6L492.8 1168.1L493.8 1168.3L494.8 1168.2L495.8 1168.0L496.8 1168.1L497.7 1168.4L497.8 1169.0L498.8 1168.1L499.8 1168.9L500.8 1168.1L501.8 1167.5L502.8 1167.6L503.8 1168.0L504.8 1166.8L505.8 1166.8L506.8 1166.9L507.8 1166.7L508.8 1166.4L509.8 1165.9L510.8 1166.0L511.8 1164.0L512.8 1166.1L513.8 1165.7L514.8 1166.1L515.8 1166.3L515.9 1165.7L516.8 1165.5L517.8 1165.3L518.8 1165.5L519.8 1165.5L520.8 1164.7L521.8 1165.5L522.8 1165.8L523.8 1165.7L524.8 1165.5L525.8 1165.3L526.8 1165.5L527.8 1165.7L528.8 1164.9L529.8 1165.5L530.8 1165.6L531.8 1165.4L532.8 1165.5L533.8 1165.1L534.8 1165.7L535.8 1165.7L536.8 1163.5L537.8 1165.7L538.8 1166.3L539.8 1165.0L540.8 1165.5L541.8 1165.5L542.8 1165.6L543.8 1165.4L544.8 1165.1L545.8 1166.8L546.8 1165.4L547.8 1166.0L548.8 1165.7L549.8 1165.3L550.8 1165.0L551.8 1165.2L552.8 1165.5L553.8 1165.5L554.8 1165.9L555.8 1165.3L556.8 1165.3L557.8 1165.7L558.8 1164.9L559.8 1165.2L560.8 1165.6L561.8 1165.3L562.8 1165.3L563.8 1165.1L564.8 1165.5L565.8 1165.0L566.8 1165.9L567.8 1165.5L568.8 1165.2L569.8 1166.3L570.8 1166.0L571.8 1166.0L572.8 1165.4L573.8 1166.1L574.8 1165.7L575.8 1165.3L576.8 1166.0L577.8 1165.4L578.8 1164.9L579.8 1165.3L580.8 1165.1L581.8 1165.8L582.8 1165.1L583.8 1165.0L584.8 1166.1L585.8 1165.9L586.8 1165.3L587.8 1166.5L588.8 1165.3L589.8 1165.6L590.8 1165.8L591.8 1165.4L592.8 1165.8L593.8 1166.0L594.8 1165.4L595.8 1165.6L596.8 1165.5L597.8 1165.2L598.8 1164.6L599.8 1165.5L600.8 1164.8L601.8 1165.6L602.8 1165.6L603.8 1165.7L604.8 1165.3L605.8 1165.9L606.8 1165.6L607.8 1165.9L608.8 1165.5L609.8 1163.8L610.8 1166.6L611.8 1165.1L612.8 1165.0L613.8 1166.3L614.8 1165.3L615.8 1165.6L616.8 1164.9L617.8 1165.1L618.8 1166.1L619.8 1165.2L620.8 1166.3L621.8 1166.1L622.8 1165.0L623.8 1165.6L624.8 1165.0L625.8 1166.0L626.8 1165.3L627.8 1165.8L628.8 1165.0L629.8 1165.5L630.8 1165.9L631.8 1166.3L632.8 1165.8L633.8 1166.2L634.8 1165.9L635.8 1165.1L636.8 1166.1L637.8 1165.1L638.8 1165.0L639.8 1165.6L640.8 1165.3L641.8 1166.1L642.8 1166.0L643.8 1165.2L644.8 1165.7L645.8 1165.8L646.8 1166.0L647.8 1165.6L648.8 1165.5L649.8 1165.3L650.8 1165.4L651.8 1166.1L652.8 1165.9L653.8 1165.5L654.8 1165.9L655.8 1165.8L656.8 1166.5L657.8 1165.2L658.8 1166.1L659.8 1165.6L660.8 1166.0L661.8 1165.2L662.8 1165.5L663.8 1167.4L664.8 1165.2L665.8 1166.0L666.8 1166.5L667.8 1165.9L668.8 1165.4L669.8 1166.2L670.8 1165.8L671.8 1166.2L672.8 1165.6L673.8 1166.0L674.8 1166.1L675.8 1165.4L676.8 1165.5L677.8 1165.3L678.8 1167.3L679.8 1165.9L680.8 1165.6L681.8 1165.8L682.8 1166.4L683.8 1166.5L684.8 1164.9L685.8 1165.2L686.8 1165.8L687.8 1165.3L688.8 1163.9L689.8 1166.3L690.8 1165.1L691.8 1165.6L692.8 1165.9L693.8 1165.2L694.8 1166.1L695.8 1166.0L696.8 1165.4L697.8 1165.4L698.8 1165.4L699.8 1166.0L700.8 1166.0L701.8 1165.8L702.8 1165.2L703.8 1165.3L704.8 1165.7L705.8 1165.8L706.8 1166.1L707.8 1166.3L708.8 1166.1L709.8 1166.0L710.8 1165.3L711.8 1165.6L712.8 1165.7L713.8 1165.1L714.8 1165.7L715.8 1165.6L716.8 1165.6L717.8 1166.4L718.8 1165.8L719.8 1165.5L720.8 1166.0L721.8 1165.8L722.8 1165.5L723.8 1165.7L724.8 1166.0L725.8 1165.2L726.8 1165.3L727.8 1165.7L728.8 1165.8L729.8 1165.3L730.8 1166.6L731.8 1165.4L732.8 1167.0L733.8 1166.4L734.8 1167.7L735.8 1165.7L736.8 1166.2L737.8 1166.0L738.8 1165.9L739.8 1165.7L740.8 1166.0L741.8 1166.6L742.8 1165.6L743.8 1164.8L744.8 1165.4L745.8 1165.8L746.8 1165.7L747.8 1165.3L748.8 1166.1L749.8 1166.0L750.8 1166.0L751.8 1166.1L752.8 1165.9L753.8 1165.6L754.8 1165.8L755.8 1166.0L756.8 1165.7L757.8 1165.6L758.8 1166.2L759.8 1166.4L760.8 1165.9L761.8 1166.4L762.8 1165.4L763.8 1165.3L764.8 1166.0L765.8 1166.6L766.8 1165.6L767.8 1165.5L768.8 1165.6L769.8 1166.4L770.8 1165.1L771.8 1166.0L772.8 1164.6L773.8 1165.8L774.8 1165.8L775.8 1165.6L776.8 1165.4L777.8 1166.8L778.8 1165.6L779.8 1165.7L780.8 1166.2L781.8 1166.0L782.8 1165.1L783.8 1165.7L784.8 1165.5L785.8 1165.7L786.8 1165.7L787.8 1165.7L788.8 1166.7L789.8 1165.8L790.8 1165.6L791.8 1166.3L792.8 1165.5L793.8 1166.4L794.8 1166.2L795.8 1166.5L796.8 1166.4L797.8 1165.8L798.8 1166.5L799.8 1165.2L800.8 1165.9L801.8 1165.8L802.8 1166.2L803.8 1166.3L804.8 1165.8L805.8 1165.9L806.8 1165.4L807.8 1166.3L808.8 1165.7L809.8 1166.2L810.8 1166.3L811.8 1165.2L812.8 1165.7L813.8 1165.6L814.8 1166.1L815.8 1165.7L816.8 1165.9L817.8 1166.3L818.8 1166.0L819.8 1165.8L820.8 1165.5L821.8 1166.4L822.8 1166.4L823.8 1165.5L824.8 1165.9L825.8 1165.2L826.8 1166.0L827.8 1166.0L828.8 1166.7L829.8 1166.0L830.8 1165.3L831.8 1165.7L832.8 1166.0L833.8 1165.6L834.8 1165.3L835.8 1166.3L836.8 1165.0L837.8 1165.7L838.8 1165.4L839.8 1166.2L840.8 1166.2L841.8 1165.6L842.8 1166.3L843.8 1166.3L844.8 1166.6L845.8 1166.1L846.8 1165.9L847.8 1165.5L848.8 1164.2L849.8 1164.9L850.8 1166.2L851.8 1166.1L852.8 1165.0L853.8 1166.2L854.8 1165.8L855.8 1166.0L856.8 1166.1L857.8 1165.8L858.8 1165.3L859.8 1166.0L860.8 1166.1L861.8 1165.9L862.8 1165.6L863.8 1166.1L864.8 1166.1L865.8 1165.8L866.8 1167.0L867.8 1166.4L868.8 1165.6L869.8 1165.8L870.8 1165.5L871.8 1166.8L872.8 1165.9L873.8 1166.3L874.8 1166.3L875.8 1165.8L876.8 1164.0L877.8 1166.5L878.8 1165.0L879.8 1165.9L880.8 1166.2L881.8 1167.2L882.8 1165.6L883.8 1165.8L884.8 1165.8L885.8 1165.4L886.8 1166.6L887.8 1166.1L888.8 1166.1L889.8 1166.2L890.8 1166.4L891.8 1163.5L892.8 1166.2L893.8 1168.1L894.8 1166.7L895.8 1166.3L896.8 1166.2L897.8 1166.0L898.8 1165.7L899.8 1165.5L900.8 1166.1L901.8 1166.0L902.8 1166.1L903.8 1166.5L904.8 1166.3L905.8 1165.0L906.8 1165.9L907.8 1165.9L908.8 1166.3L909.8 1165.8L910.8 1166.1L911.8 1166.3L912.8 1165.5L913.8 1166.4L914.8 1166.2L915.8 1166.0L916.8 1165.4L917.8 1165.8L918.8 1165.6L919.8 1166.0L920.8 1166.0L921.8 1166.1L922.8 1166.2L923.5 1049.8L923.8 1012.8L924.8 887.0L925.5 800.4L925.8 830.5L926.3 880.2L926.8 899.8L927.1 911.3L927.8 896.3L928.5 881.6L928.8 883.9L929.8 887.1L930.8 891.3L931.8 891.5L932.8 890.5L933.8 891.0L934.8 891.6L935.8 891.3L936.8 890.9L937.8 891.2L938.8 891.1L939.8 892.0L940.8 891.5L941.8 891.5L942.8 891.9L943.8 891.1L944.8 891.5L945.8 891.3L946.8 891.6L947.8 891.5L948.5 891.9L948.8 932.2L949.3 1000.4L949.8 1095.3L950.0 1134.5L950.8 1146.7L951.8 1162.6L952.8 1162.8L953.8 1162.3L954.8 1162.1L955.8 1161.6L956.0 1162.0L956.8 1161.5L957.8 1161.5L958.8 1161.4L959.8 1160.6L960.8 1160.5L961.8 1160.6L962.8 1160.2L963.8 1159.4L964.8 1160.0L965.8 1160.1L966.5 1159.1L966.8 1160.1L967.8 1159.9L968.8 1160.8L969.8 1160.0L970.8 1160.2L971.8 1160.8L972.8 1161.2L973.8 1160.9L974.8 1160.8L975.8 1161.8L976.8 1162.4L977.8 1162.1L978.0 1162.5L978.8 1162.7L979.8 1162.6L980.8 1163.5L981.8 1164.6L982.8 1165.0L983.8 1165.6L984.8 1166.1L985.0 1165.7L985.8 1165.8L986.8 1166.1L987.8 1166.6L988.8 1166.6L989.8 1167.3L990.8 1165.8L991.8 1166.1L992.8 1165.4L993.8 1166.1L994.8 1166.1L995.8 1165.5L996.8 1165.8L997.8 1165.8L998.8 1165.2L999.8 1166.1L1000.8 1165.2L1001.8 1165.2L1002.8 1165.9L1003.8 1166.0L1004.8 1166.4L1005.8 1166.3L1006.8 1166.0L1007.8 1165.8L1008.8 1165.7L1009.8 1165.7L1010.8 1165.6L1011.8 1165.4L1012.8 1164.5L1013.8 1165.8L1014.8 1166.2L1015.8 1166.3L1016.8 1165.6L1017.8 1166.2L1018.0 1166.2L1018.8 1166.3L1019.8 1166.2L1020.8 1166.5L1021.8 1166.5L1022.8 1166.2L1023.8 1166.9L1024.8 1165.7L1025.8 1166.9L1026.8 1166.7L1027.8 1167.3L1028.8 1167.6L1029.8 1167.2L1030.8 1167.3L1031.8 1167.6L1032.8 1167.7L1033.8 1168.2L1034.8 1168.0L1035.8 1168.6L1036.8 1167.5L1037.8 1169.0L1038.8 1169.0L1039.8 1169.3L1040.0 1168.6L1040.8 1168.8L1041.8 1168.6L1042.8 1165.8L1043.8 1168.2L1044.8 1167.4L1045.8 1166.7L1046.8 1167.0L1047.8 1167.1L1048.8 1167.0L1049.8 1166.3L1050.8 1165.6L1051.8 1165.9L1052.8 1166.3L1053.8 1165.8L1054.0 1165.7L1054.8 1166.2L1055.8 1165.5L1056.8 1165.3L1057.8 1165.1L1058.8 1166.0L1059.8 1165.4L1060.8 1166.7L1061.8 1166.2L1062.8 1165.4L1063.8 1165.6L1064.8 1166.0L1065.0 1165.9L1065.8 1166.5L1066.8 1166.1L1067.8 1166.2L1068.8 1165.6L1069.8 1165.8L1070.8 1166.5L1071.8 1163.8L1072.8 1166.6L1073.8 1166.2L1074.8 1166.3L1075.8 1166.7L1076.8 1165.6L1077.8 1166.1L1078.8 1165.7L1079.8 1166.0L1080.8 1165.7L1081.8 1165.5L1082.8 1165.8L1083.8 1165.9L1084.8 1165.6L1085.8 1166.3L1086.8 1167.0L1087.8 1166.2L1088.8 1165.7L1089.8 1166.1L1090.8 1166.3L1091.8 1163.9L1092.8 1166.0L1093.8 1165.9L1094.8 1165.6L1095.8 1166.8L1096.8 1165.5L1097.8 1165.8L1098.8 1166.1L1099.8 1166.6L1100.8 1165.8L1101.8 1166.3L1102.8 1165.8L1103.8 1165.9L1104.8 1166.5L1105.8 1166.3L1106.8 1165.3L1107.8 1166.3L1108.8 1166.4L1109.8 1165.9L1110.8 1165.8L1111.8 1166.4L1112.8 1165.9L1113.8 1165.9L1114.8 1165.6L1115.8 1166.4L1116.8 1166.8L1117.8 1165.7L1118.8 1166.1L1119.8 1166.1L1120.8 1165.8L1121.8 1165.7L1122.8 1165.7L1123.8 1166.3L1124.8 1165.7L1125.8 1166.4L1126.8 1166.3L1127.8 1165.7L1128.8 1165.6L1129.8 1165.9L1130.8 1166.2L1131.8 1166.2L1132.8 1166.3L1133.8 1166.1L1134.8 1165.9L1135.8 1166.1L1136.8 1166.3L1137.8 1167.6L1138.8 1166.3L1139.8 1166.1L1140.8 1166.8L1141.8 1166.2L1142.8 1165.9L1143.8 1165.9L1144.8 1166.0L1145.8 1165.9L1146.8 1166.4L1147.8 1166.1L1148.8 1166.4L1149.8 1166.0L1150.8 1165.4L1151.8 1166.0L1152.8 1165.7L1153.8 1166.1L1154.8 1165.8L1155.8 1166.9L1156.8 1165.8L1157.8 1166.5L1158.8 1166.4L1159.8 1166.3L1160.8 1166.0L1161.8 1166.3L1162.8 1166.7L1163.8 1165.4L1164.8 1165.3L1165.8 1166.4L1166.8 1166.0L1167.8 1165.7L1168.8 1166.0L1169.8 1166.1L1170.8 1166.1L1171.8 1165.9L1172.8 1165.8L1173.8 1166.4L1174.8 1166.0L1175.8 1165.9L1176.8 1165.5L1177.8 1166.2L1178.8 1165.9L1179.8 1165.9L1180.8 1166.1L1181.8 1166.2L1182.8 1166.5L1183.8 1165.5L1184.8 1166.0L1185.8 1165.9L1186.8 1165.8L1187.8 1165.6L1188.8 1166.4L1189.8 1166.1L1190.8 1166.2L1191.8 1166.1L1192.8 1166.1L1193.8 1165.7L1194.8 1165.4L1195.8 1166.1L1196.8 1165.9L1197.8 1165.3L1198.8 1166.0L1199.8 1164.5L1200.8 1165.9L1201.8 1166.2L1202.8 1166.1L1203.8 1166.5L1204.8 1166.6L1205.8 1166.1L1206.8 1166.8L1207.8 1166.8L1208.8 1166.6L1209.8 1166.2L1210.8 1165.9L1211.8 1165.5L1212.8 1165.7L1213.8 1166.2L1214.8 1166.4L1215.8 1166.0L1216.8 1166.4L1217.8 1166.2L1218.8 1165.6L1219.8 1165.6L1220.8 1166.0L1221.8 1165.3L1222.8 1166.5L1223.8 1167.0L1224.8 1165.3L1225.8 1166.3L1226.8 1165.5L1227.8 1165.6L1228.8 1165.5L1229.8 1166.2L1230.8 1165.9L1231.8 1166.2L1232.8 1166.5L1233.8 1166.0L1234.8 1165.9L1235.8 1166.0L1236.8 1165.9L1237.8 1165.7L1238.8 1166.3L1239.8 1166.0L1240.8 1165.5L1241.8 1165.8L1242.8 1166.0L1243.8 1166.3L1244.8 1164.8L1245.8 1166.1L1246.8 1166.7L1247.8 1166.5L1248.8 1165.3L1249.8 1165.7L1250.8 1166.1L1251.8 1166.5L1252.8 1165.4L1253.8 1166.3L1254.8 1166.5L1255.8 1166.2L1256.8 1166.2L1257.8 1166.3L1258.8 1165.8L1259.8 1167.6L1260.8 1166.5L1261.8 1165.6L1262.8 1166.2L1263.8 1166.9L1264.8 1166.6L1265.8 1165.7L1266.8 1165.8L1267.8 1166.4L1268.8 1166.3L1269.8 1166.0L1270.8 1166.0L1271.8 1165.6L1272.8 1165.8L1273.8 1165.8L1274.8 1166.1L1275.8 1165.7L1276.8 1166.2L1277.8 1166.8L1278.8 1166.0L1279.8 1165.8L1280.8 1166.2L1281.8 1166.5L1282.8 1166.2L1283.8 1166.1L1284.8 1166.7L1285.8 1166.0L1286.8 1166.5L1287.8 1165.6L1288.8 1166.2L1289.8 1166.2L1290.8 1166.2L1291.8 1166.0L1292.8 1165.8L1293.8 1166.2L1294.8 1166.4L1295.8 1166.8L1296.8 1166.3L1297.8 1165.9L1298.8 1166.1L1299.8 1166.1L1300.8 1165.6L1301.8 1166.2L1302.8 1166.2L1303.8 1165.8L1304.8 1165.8L1305.8 1166.2L1306.8 1166.1L1307.8 1164.3L1308.8 1167.2L1309.8 1166.4L1310.8 1165.7L1311.8 1166.4L1312.8 1166.3L1313.8 1165.8L1314.8 1165.8L1315.8 1165.9L1316.8 1166.0L1317.8 1165.7L1318.8 1164.5L1319.8 1165.4L1320.8 1165.6L1321.8 1166.9L1322.8 1166.3L1323.8 1166.7L1324.8 1165.7L1325.8 1165.7L1326.8 1165.9L1327.8 1165.8L1328.8 1165.8L1329.8 1165.3L1330.8 1165.7L1331.8 1166.5L1332.8 1166.2L1333.8 1166.6L1334.8 1166.0L1335.8 1165.5L1336.8 1167.6L1337.8 1165.9L1338.8 1165.5L1339.8 1166.3L1340.8 1166.0L1341.8 1166.4L1342.8 1165.5L1343.8 1166.2L1344.8 1165.5L1345.8 1166.2L1346.8 1165.9L1347.8 1166.3L1348.8 1166.0L1349.8 1166.4L1350.8 1166.0L1351.8 1166.1L1352.8 1166.0L1353.8 1166.9L1354.8 1166.1L1355.8 1166.0L1356.8 1166.2L1357.8 1166.0L1358.8 1166.1L1359.8 1165.4L1360.8 1166.3L1361.8 1166.7L1362.8 1166.7L1363.8 1166.2L1364.8 1166.0L1365.8 1166.3L1366.8 1165.9L1367.8 1166.5L1368.8 1165.1L1369.8 1166.3L1370.8 1166.7L1371.8 1165.9L1372.8 1165.7L1373.8 1166.3L1374.8 1166.6L1375.8 1166.1L1376.8 1166.0L1377.8 1166.1L1378.8 1166.1L1379.8 1166.6L1380.8 1165.8L1381.8 1165.9L1382.8 1166.2L1383.8 1164.7L1384.8 1167.0L1385.8 1166.4L1386.8 1166.4L1387.8 1166.0L1388.8 1166.0L1389.8 1165.7L1390.8 1165.9L1391.8 1165.6L1392.8 1166.7L1393.8 1165.8L1394.8 1166.3L1395.8 1165.9L1396.8 1166.2L1397.8 1165.9L1398.8 1166.6L1399.8 1166.5L1400.8 1166.3L1401.8 1165.9L1402.8 1166.3L1403.8 1167.4L1404.8 1166.1L1405.8 1166.5L1406.8 1166.0L1407.8 1166.1L1408.8 1165.9L1409.8 1165.9L1410.8 1166.2L1411.8 1165.9L1412.8 1166.9L1413.8 1165.7L1414.8 1165.7L1415.8 1166.0L1416.8 1166.1L1417.8 1166.0L1418.8 1166.6L1419.8 1168.0L1420.8 1165.8L1421.8 1165.9L1422.8 1165.5L1423.8 1166.5L1424.8 1166.1L1425.8 1165.8L1426.8 1165.6L1427.8 1165.9L1428.8 1166.3L1429.8 1166.1L1430.8 1165.4L1431.8 1165.6L1432.8 1165.9L1433.8 1164.9L1434.8 1166.1L1435.8 1166.8L1436.8 1166.1L1437.8 1165.5L1438.8 1166.1L1439.8 1166.1L1440.8 1166.3L1441.8 1165.9L1442.8 1166.9L1443.8 1166.1L1444.8 1165.9L1445.8 1166.4L1446.8 1166.5L1447.8 1166.3L1448.8 1166.4L1449.8 1166.4L1450.8 1166.3L1451.8 1166.1L1452.8 1165.7L1453.8 1165.9L1454.8 1166.2L1455.8 1166.7L1456.8 1165.7L1457.8 1166.4L1458.8 1165.5L1459.8 1165.9L1460.8 1166.4L1461.8 1165.8L1462.8 1166.0L1463.8 1166.7L1464.8 1166.2L1465.8 1165.8L1466.8 1166.5L1467.8 1166.3L1468.8 1166.7L1469.8 1165.7L1470.8 1166.6L1471.8 1166.5L1472.8 1165.7L1473.8 1165.9L1474.8 1165.6L1475.8 1165.6L1476.8 1166.4L1477.8 1166.6L1478.8 1166.1L1479.8 1166.2L1480.8 1165.5L1481.8 1166.6L1482.8 1166.6L1483.8 1166.3L1484.8 1165.9L1485.8 1167.1L1486.8 1167.1L1487.8 1165.8L1488.8 1166.7L1489.8 1166.1L1490.8 1165.9L1491.8 1166.4L1492.8 1166.3L1493.8 1166.8L1494.8 1165.5L1495.8 1166.0L1496.8 1165.7L1497.8 1166.2L1498.8 1166.1L1499.8 1166.3L1500.8 1164.9L1501.8 1166.1L1502.8 1166.2L1503.8 1166.2L1504.8 1166.3L1505.8 1166.3L1506.8 1166.4L1507.8 1166.0L1508.8 1166.6L1509.8 1165.6L1510.8 1166.9L1511.8 1165.8L1512.8 1166.2L1513.8 1166.0L1514.8 1166.0L1515.8 1166.7L1516.8 1166.3L1517.8 1166.3L1518.8 1165.8L1519.8 1166.3L1520.8 1166.7L1521.8 1166.4L1522.8 1166.7L1523.8 1166.3L1524.8 1166.3L1525.8 1166.2L1526.8 1166.0L1527.8 1166.3L1528.8 1166.3L1529.8 1166.5L1530.8 1166.0L1531.8 1165.6L1532.8 1167.0L1533.8 1165.2L1534.8 1165.9L1535.8 1166.2L1536.8 1165.5L1537.8 1166.3L1538.8 1166.1L1539.8 1165.9L1540.8 1166.7L1541.8 1167.0L1542.8 1166.4L1543.8 1165.4L1544.8 1166.3L1545.8 1166.6L1546.8 1166.2L1547.8 1166.0L1548.8 1165.8L1549.8 1166.3L1550.8 1166.1L1551.8 1166.1L1552.8 1166.1L1553.8 1165.5L1554.8 1164.1L1555.8 1166.1L1556.8 1166.3L1557.8 1166.1L1558.8 1165.9L1559.8 1165.9L1560.8 1165.7L1561.8 1166.2L1562.8 1166.1L1563.8 1166.3L1564.8 1166.2L1565.8 1166.1L1566.8 1166.0L1567.8 1165.9L1568.8 1166.2L1569.8 1166.7L1570.8 1166.8L1571.8 1166.2L1572.8 1166.6L1573.8 1166.5L1574.8 1165.9L1575.8 1166.2L1576.8 1166.2L1577.8 1166.5L1578.8 1166.5L1579.8 1165.3L1580.8 1166.2L1581.8 1166.2L1582.8 1165.8L1583.8 1165.7L1584.8 1166.0L1585.8 1165.7L1586.8 1166.8L1587.8 1166.4L1588.8 1166.4L1589.8 1166.1L1590.8 1165.6L1591.8 1165.3L1592.8 1165.8L1593.8 1165.8L1594.8 1165.9L1595.8 1166.5L1596.8 1166.5L1597.8 1165.8L1598.8 1166.0L1599.8 1165.4L1600.8 1165.3L1601.8 1166.5L1602.8 1166.5L1603.8 1166.7L1604.8 1166.3L1605.8 1166.0L1606.8 1165.4L1607.8 1166.4L1608.8 1166.0L1609.8 1166.5L1610.8 1165.4L1611.8 1166.4L1612.8 1166.3L1613.8 1165.9L1614.8 1166.5L1615.8 1166.4L1616.8 1165.3L1617.8 1166.3L1618.8 1166.8L1619.8 1166.4L1620.8 1165.3L1621.8 1166.2L1622.8 1166.1L1623.8 1165.9L1624.8 1164.6L1625.8 1166.3L1626.8 1167.0L1627.8 1166.5L1628.8 1165.6L1629.8 1166.2L1630.8 1167.6L1631.8 1165.7L1632.8 1166.5L1633.8 1166.4L1634.8 1166.2L1635.8 1166.0L1636.8 1166.7L1637.8 1166.2L1638.8 1166.7L1639.8 1166.4L1640.8 1166.4L1641.8 1166.3L1642.8 1166.4L1643.8 1166.0L1644.8 1166.5L1645.8 1165.8L1646.8 1166.2L1647.8 1165.4L1648.8 1166.6L1649.8 1165.6L1650.8 1166.1L1651.8 1166.7L1652.8 1166.8L1653.8 1165.7L1654.8 1166.3L1655.8 1165.9L1656.8 1165.1L1657.8 1166.2L1658.8 1165.9L1659.8 1166.4L1660.8 1166.4L1661.8 1166.9L1662.8 1166.1L1663.8 1166.1L1664.8 1166.1L1665.8 1164.3L1666.8 1165.8L1667.8 1165.5L1668.8 1166.1L1669.8 1166.2L1670.8 1167.3L1671.8 1167.3L1672.8 1166.5L1673.8 1166.6L1674.8 1166.6L1675.8 1166.1L1676.8 1166.4L1677.8 1166.8L1678.8 1166.1L1679.8 1166.2L1680.8 1166.4L1681.8 1165.9L1682.8 1166.0L1683.8 1166.5L1684.8 1166.1L1685.8 1165.9L1686.8 1165.8L1687.8 1166.4L1688.8 1166.4L1689.8 1165.7L1690.8 1166.3L1691.8 1166.1L1692.8 1167.8L1693.8 1166.2L1694.8 1166.1L1695.8 1166.0L1696.8 1166.9L1697.8 1166.0L1698.8 1166.2L1699.8 1165.9L1700.8 1166.1L1701.8 1166.0L1702.8 1166.3L1703.8 1166.1L1704.8 1166.5L1705.8 1165.7L1706.8 1166.1L1707.8 1166.8L1708.8 1166.6L1709.8 1166.6L1710.8 1165.8L1711.8 1163.8L1712.8 1166.9L1713.8 1166.0L1714.8 1165.5L1715.8 1166.1L1716.8 1166.4L1717.8 1166.0L1718.8 1166.5L1719.8 1165.5L1720.8 1166.4L1721.8 1165.5L1722.8 1166.2L1723.8 1166.1L1724.8 1165.8L1725.8 1165.9L1726.8 1166.1L1727.8 1166.3L1728.8 1165.9L1729.8 1166.3L1730.8 1166.2L1731.8 1165.7L1732.8 1166.0L1733.8 1167.0L1734.8 1166.7L1735.8 1165.9L1736.8 1165.7L1737.8 1164.3L1738.8 1166.2L1739.8 1166.6L1740.8 1166.0L1741.8 1166.7L1742.8 1165.6L1743.8 1164.9L1744.8 1166.1L1745.8 1166.0L1746.8 1166.8L1747.8 1165.7L1748.8 1166.8L1749.8 1165.5L1750.8 1165.9L1751.8 1167.1L1752.8 1166.3L1753.8 1166.4L1754.8 1166.0L1755.8 1166.4L1756.8 1165.9L1757.8 1166.4L1758.8 1166.3L1759.8 1166.1L1760.8 1166.5L1761.8 1166.9L1762.8 1165.8L1763.8 1166.0L1764.8 1166.7L1765.8 1166.8L1766.8 1166.0L1767.8 1166.5L1768.8 1166.5L1769.8 1167.0L1770.8 1166.2L1771.8 1166.2L1772.8 1166.3L1773.8 1165.9L1774.8 1166.2L1775.8 1165.9L1776.8 1166.0L1777.8 1166.1L1778.8 1165.8L1779.8 1166.7L1780.8 1166.3L1781.8 1166.7L1782.8 1165.6L1783.8 1166.0L1784.8 1166.2L1785.8 1168.0L1786.8 1166.2L1787.8 1165.7L1788.8 1166.7L1789.8 1165.9L1790.8 1166.8L1791.8 1166.3L1792.8 1166.1L1793.8 1165.1L1794.8 1166.5L1795.8 1166.2L1796.8 1166.2L1797.8 1166.2L1798.8 1166.6L1799.8 1165.6L1800.8 1166.1L1801.8 1165.6L1802.8 1166.0L1803.8 1166.8L1804.8 1167.5L1805.8 1166.2L1806.8 1166.6L1807.8 1166.1L1808.8 1165.7L1809.8 1166.8L1810.8 1166.5L1811.8 1167.5L1812.8 1166.9L1813.8 1166.5L1814.8 1165.2L1815.8 1166.2L1816.8 1166.7L1817.8 1165.9L1818.8 1165.6L1819.8 1166.4L1820.8 1164.4L1821.8 1166.3L1822.8 1166.1L1823.8 1166.0L1824.8 1166.6L1825.8 1166.5L1826.8 1166.8L1827.8 1166.5L1828.8 1166.6L1829.8 1166.1L1830.8 1167.2L1831.8 1166.2L1832.8 1166.4L1833.8 1166.6L1834.8 1166.5L1835.8 1166.3L1836.8 1166.5L1837.8 1166.6L1838.8 1166.5L1839.8 1166.4L1840.8 1165.8L1841.8 1165.8L1842.8 1166.4L1843.8 1165.8L1844.8 1166.1L1845.8 1166.5L1846.8 1165.5L1847.8 1165.3L1848.8 1166.8L1849.8 1166.6L1850.8 1165.9L1851.8 1166.7L1852.8 1166.6L1853.8 1165.9L1854.8 1166.6L1855.8 1165.6L1856.8 1166.5L1857.8 1165.8L1858.8 1166.3L1859.8 1166.4L1860.8 1167.0L1861.8 1166.4L1862.8 1166.4L1863.8 1166.6L1864.8 1165.9L1865.8 1166.0L1866.8 1166.2L1867.8 1166.7L1868.8 1166.7L1869.8 1166.4L1870.8 1166.8L1871.8 1166.5L1872.8 1167.1L1873.8 1166.2L1874.8 1165.5L1875.8 1166.9L1876.8 1167.9L1877.8 1167.0L1878.8 1166.1L1879.8 1166.3L1880.8 1166.2L1881.8 1165.7L1882.8 1166.4L1883.8 1166.2L1884.8 1165.8L1885.8 1166.6L1886.8 1165.9L1887.8 1166.9L1888.8 1166.3L1889.8 1166.4L1890.8 1165.8L1891.8 1165.5L1892.8 1166.4L1893.8 1166.2L1894.8 1166.7L1895.8 1165.6L1896.8 1165.5L1897.8 1166.0L1898.8 1165.8L1899.8 1165.9L1900.8 1165.3L1901.8 1165.7L1902.8 1164.2L1903.8 1166.3L1904.8 1166.0L1905.8 1166.4L1906.8 1166.3L1907.8 1166.7L1908.8 1166.3L1909.8 1166.3L1910.8 1165.9L1911.8 1166.0L1912.8 1165.5L1913.8 1166.2L1914.8 1165.7L1915.8 1166.4L1916.8 1166.4L1917.8 1166.9L1918.8 1166.5L1919.8 1166.4L1920.8 1166.9L1921.8 1166.3L1922.8 1166.8L1923.8 1166.7L1924.8 1166.9L1925.8 1166.4L1926.8 1166.5L1927.8 1166.1L1928.8 1166.7L1929.8 1165.8L1930.8 1166.0L1931.8 1166.3L1932.8 1166.3L1933.8 1166.4L1934.8 1166.4L1935.8 1166.3L1936.8 1167.9L1937.8 1165.8L1938.8 1166.8L1939.8 1166.0L1940.8 1165.6L1941.8 1166.2L1942.8 1166.5L1943.8 1165.8L1944.8 1165.9L1945.8 1165.7L1946.8 1166.4L1947.8 1166.9L1948.8 1167.0L1949.8 1166.5L1950.8 1166.3L1951.8 1165.7L1952.8 1165.8L1953.8 1166.5L1954.8 1166.8L1955.8 1166.4L1956.8 1166.2L1957.8 1165.3L1958.8 1165.9L1959.8 1166.2L1960.8 1166.5L1961.8 1166.0L1962.8 1166.4L1963.8 1166.0L1964.8 1166.2L1965.8 1166.2L1966.8 1166.1L1967.8 1166.8L1968.8 1166.3L1969.8 1166.4L1970.8 1166.7L1971.8 1166.0L1972.8 1166.8L1973.8 1166.4L1974.8 1166.3L1975.8 1166.9L1976.8 1166.1L1977.8 1166.7L1978.8 1166.1L1979.8 1166.2L1980.8 1165.8L1981.8 1166.2L1982.8 1166.1L1983.8 1166.6L1984.8 1165.4L1985.8 1166.4L1986.8 1166.5L1987.8 1165.9L1988.8 1166.5L1989.8 1166.4L1990.8 1165.9L1991.8 1166.7L1992.8 1166.2L1993.8 1166.7L1994.8 1165.8L1995.8 1165.7L1996.8 1166.3L1997.8 1166.2L1998.8 1166.7L1999.8 1165.3L2000.8 1166.7L2001.8 1166.0L2002.8 1166.8L2003.8 1166.6L2004.8 1166.5L2005.8 1166.1L2006.8 1166.7L2007.8 1166.9L2008.8 1167.1L2009.8 1166.2L2010.8 1166.5L2011.8 1166.2L2012.8 1166.3L2013.8 1166.4L2014.8 1166.9L2015.8 1166.8L2016.8 1166.3L2017.8 1165.9L2018.0 1166.5" fill="none" stroke="#dc1820" stroke-width="2.1" stroke-linejoin="round"/>
<path d="M414.6 826V908M417.4 880V900" stroke="#dc1820" stroke-width="3.2" fill="none"/>
<path d="M925.6 826V882" stroke="#dc1820" stroke-width="3.2" fill="none"/>
<path d="M235.8 715.1L236.8 715.4L237.8 714.8L238.8 715.1L239.8 715.6L240.8 715.3L241.8 714.5L242.8 715.5L243.8 714.5L244.8 714.5L245.8 715.3L246.8 715.2L247.8 715.3L248.8 715.4L249.8 715.4L250.8 715.7L251.8 715.1L252.8 715.2L253.8 715.0L254.8 714.8L255.8 714.9L256.8 715.3L257.8 715.2L258.8 715.7L259.8 715.2L260.8 714.9L261.8 714.6L262.8 715.5L263.8 715.8L264.8 715.3L265.8 715.4L266.8 715.0L267.8 714.8L268.8 715.0L269.8 714.6L270.8 715.3L271.8 714.4L272.8 714.2L273.8 716.8L274.8 715.6L275.8 714.8L276.8 714.9L277.8 715.2L278.8 714.8L279.8 715.4L280.8 715.6L281.8 714.7L282.8 715.4L283.8 715.0L284.8 714.8L285.8 713.9L286.8 715.7L287.8 715.2L288.8 715.4L289.8 715.1L290.8 715.4L291.8 714.8L292.8 714.7L293.8 715.8L294.8 715.0L295.8 714.8L296.8 715.5L297.8 715.6L298.8 715.2L299.8 715.6L300.8 715.5L301.8 715.1L302.8 715.1L303.8 714.5L304.8 714.5L305.8 715.5L306.8 715.5L307.8 715.1L308.8 715.4L309.8 714.6L310.8 715.3L311.8 715.6L312.8 715.1L313.8 715.2L314.8 714.9L315.8 715.5L316.8 714.8L317.8 715.3L318.8 715.7L319.8 714.7L320.8 714.7L321.8 715.2L322.8 715.6L323.8 714.6L324.8 715.2L325.8 714.9L326.8 715.2L327.8 715.4L328.8 714.6L329.8 715.4L330.8 715.3L331.8 714.0L332.8 713.7L333.8 714.9L334.8 715.7L335.8 714.7L336.8 715.6L337.8 714.7L338.8 715.4L339.8 715.1L340.8 714.8L341.8 715.9L342.8 716.3L343.8 714.6L344.8 715.3L345.8 714.3L346.8 715.4L347.8 715.9L348.8 715.3L349.8 715.2L350.8 715.0L351.8 715.3L352.8 715.1L353.8 715.2L354.8 714.8L355.8 715.8L356.8 715.4L357.8 715.4L358.8 714.8L359.8 715.4L360.8 715.4L361.8 715.3L362.8 714.7L363.8 715.6L364.8 715.6L365.8 715.0L366.8 714.8L367.8 715.3L368.8 715.1L369.8 715.6L370.8 715.5L371.8 715.5L372.8 715.3L373.8 715.3L374.8 715.5L375.8 714.9L376.8 715.2L377.8 716.0L378.8 714.8L379.8 714.8L380.8 715.3L381.8 715.0L382.8 714.8L383.8 715.7L384.8 715.7L385.8 715.0L386.8 715.4L387.8 715.2L388.8 715.0L389.8 715.1L390.8 715.0L391.8 714.9L392.8 715.4L393.8 715.0L394.8 715.5L395.8 714.8L396.8 715.5L397.8 715.9L398.8 715.8L399.8 715.5L400.8 715.4L401.8 715.2L402.8 714.5L403.8 715.6L404.8 715.1L405.8 714.8L406.8 715.2L407.8 715.5L408.8 718.2L409.8 715.3L410.8 715.0L411.0 715.5L411.8 622.7L412.0 600.3L412.8 463.9L413.5 345.0L413.8 389.1L414.3 462.1L414.8 415.7L415.2 377.9L415.8 426.5L416.2 456.7L416.8 437.6L417.2 424.5L417.8 434.9L418.4 445.7L418.8 443.5L419.8 439.8L420.0 437.3L420.8 439.2L421.8 441.0L422.0 441.8L422.8 441.8L423.8 441.3L424.8 440.7L425.8 441.1L426.8 440.6L427.8 440.8L428.8 440.1L429.8 442.2L430.0 440.3L430.8 440.5L431.8 439.9L432.8 441.9L433.8 440.3L434.8 439.9L435.8 440.6L436.8 440.6L437.8 440.4L438.8 439.7L439.6 560.2L439.8 607.4L440.2 699.8L440.8 706.9L441.0 708.5L441.8 699.6L442.5 692.0L442.8 689.4L443.8 679.0L444.8 669.8L445.0 667.5L445.8 656.3L446.8 646.4L447.8 635.4L448.8 622.7L449.8 611.5L450.5 603.0L450.8 599.3L451.8 585.3L452.8 574.5L453.8 558.8L454.8 545.4L455.8 532.6L456.0 530.0L456.8 521.1L457.8 510.6L458.8 499.7L459.8 488.8L460.8 478.5L461.4 472.1L461.8 468.8L462.8 463.0L463.8 456.5L464.8 449.7L465.8 443.2L466.8 436.4L466.9 435.5L467.8 433.3L468.8 431.2L469.8 429.0L470.5 426.8L470.8 427.9L471.8 428.9L472.8 430.0L473.8 431.8L474.0 432.1L474.8 432.2L475.8 431.4L476.8 430.7L477.8 430.8L478.8 429.5L479.6 431.5L479.8 430.0L480.8 431.7L481.8 434.8L482.5 436.3L482.8 439.3L483.8 448.5L484.8 458.5L485.8 469.7L486.8 480.4L487.8 494.2L488.8 508.9L489.8 523.8L490.8 538.2L491.8 553.0L492.3 559.9L492.8 566.2L493.8 578.4L494.8 590.3L495.8 601.6L496.8 613.6L497.7 624.8L497.8 625.5L498.8 637.6L499.8 649.5L500.8 660.2L501.8 671.0L502.8 682.8L503.2 687.0L503.8 695.0L504.8 706.6L505.7 718.1L505.8 718.4L506.8 717.6L507.8 718.2L508.8 717.6L509.8 717.8L510.0 717.7L510.8 717.3L511.8 717.6L512.8 716.4L513.8 716.8L514.8 716.2L515.8 716.2L516.0 716.3L516.8 716.3L517.8 716.1L518.8 716.3L519.8 715.0L520.8 716.3L521.8 716.1L522.8 716.0L523.8 717.4L524.8 716.0L525.8 716.4L526.8 715.7L527.8 716.0L528.8 715.7L529.8 716.5L530.8 716.4L531.8 716.1L532.8 718.0L533.8 716.0L534.8 716.8L535.8 716.1L536.8 716.1L537.8 716.0L538.8 716.0L539.8 715.7L540.8 718.1L541.8 716.2L542.8 715.9L543.8 715.9L544.8 716.4L545.8 715.4L546.8 716.2L547.8 716.3L548.8 715.5L549.8 715.5L550.8 716.0L551.8 715.8L552.8 717.5L553.8 715.8L554.8 715.3L555.8 715.5L556.8 716.5L557.8 715.8L558.8 715.5L559.8 715.9L560.8 716.0L561.8 716.0L562.8 715.7L563.8 716.0L564.8 715.7L565.8 715.1L566.8 716.3L567.8 716.7L568.8 715.7L569.8 716.4L570.8 715.5L571.8 715.5L572.8 716.0L573.8 716.0L574.8 715.7L575.8 716.5L576.8 716.4L577.8 716.0L578.8 715.0L579.8 715.3L580.8 715.8L581.8 715.1L582.8 716.3L583.8 715.9L584.8 715.0L585.8 716.5L586.8 716.0L587.8 716.0L588.8 715.4L589.8 715.4L590.8 715.4L591.8 715.6L592.8 715.7L593.8 717.2L594.8 714.9L595.8 715.5L596.8 715.2L597.8 716.2L598.8 715.2L599.8 716.5L600.0 715.7L600.8 715.8L601.8 715.8L602.8 715.7L603.8 715.1L604.8 715.8L605.8 715.9L606.8 715.3L607.8 715.5L608.8 716.1L609.8 715.8L610.8 716.6L611.8 715.5L612.8 714.7L613.8 715.8L614.8 715.7L615.8 714.9L616.8 715.5L617.8 715.8L618.8 715.3L619.8 715.6L620.8 715.7L621.8 715.4L622.8 715.5L623.8 716.0L624.8 717.6L625.8 715.5L626.8 715.6L627.8 715.4L628.8 715.9L629.8 716.5L630.8 714.9L631.8 716.1L632.8 715.7L633.8 714.5L634.8 715.3L635.8 715.3L636.8 715.6L637.8 715.8L638.8 715.5L639.8 715.5L640.8 715.6L641.8 715.8L642.8 715.3L643.8 715.4L644.8 714.9L645.8 715.3L646.8 715.3L647.8 715.1L648.8 715.8L649.8 715.3L650.8 714.7L651.8 715.8L652.8 715.6L653.8 718.2L654.8 714.8L655.8 715.8L656.8 713.6L657.8 715.5L658.8 715.5L659.8 715.0L660.8 715.4L661.8 715.1L662.8 715.5L663.8 715.5L664.8 715.6L665.8 714.7L666.8 716.2L667.8 715.6L668.8 715.3L669.8 715.2L670.8 715.8L671.8 715.0L672.8 715.2L673.8 715.2L674.8 716.3L675.8 715.6L676.8 716.0L677.8 716.2L678.8 715.9L679.8 714.8L680.8 715.1L681.8 715.7L682.8 715.4L683.8 714.7L684.8 715.0L685.8 715.6L686.8 716.5L687.8 715.3L688.8 714.8L689.8 714.8L690.8 715.2L691.8 715.4L692.8 715.4L693.8 714.8L694.8 715.9L695.8 715.9L696.8 715.9L697.8 715.6L698.8 715.3L699.8 715.2L700.8 715.2L701.8 715.1L702.8 715.1L703.8 716.0L704.8 715.2L705.8 715.0L706.8 715.2L707.8 715.6L708.8 714.9L709.8 715.3L710.8 714.8L711.8 714.9L712.8 715.3L713.8 715.6L714.8 715.0L715.8 715.5L716.8 715.2L717.8 715.1L718.8 714.7L719.8 715.3L720.8 715.2L721.8 715.7L722.8 714.9L723.8 715.5L724.8 715.1L725.8 715.3L726.8 715.5L727.8 715.1L728.8 716.0L729.8 715.0L730.8 715.1L731.8 714.5L732.8 714.9L733.8 714.8L734.8 714.6L735.8 715.2L736.8 714.8L737.8 715.0L738.8 714.8L739.8 715.3L740.8 717.4L741.8 714.9L742.8 715.0L743.8 715.2L744.8 715.0L745.8 715.8L746.8 715.5L747.8 714.3L748.8 714.7L749.8 714.8L750.8 715.2L751.8 715.1L752.8 715.6L753.8 715.8L754.8 714.9L755.8 714.8L756.8 714.7L757.8 714.6L758.8 714.9L759.8 715.0L760.8 715.0L761.8 714.6L762.8 714.2L763.8 715.4L764.8 715.6L765.8 716.2L766.8 715.6L767.8 715.6L768.8 715.0L769.8 715.2L770.8 714.7L771.8 714.2L772.8 715.8L773.8 714.6L774.8 715.4L775.8 715.8L776.8 715.5L777.8 715.7L778.8 714.7L779.8 714.8L780.8 715.7L781.8 714.9L782.8 714.9L783.8 715.0L784.8 715.1L785.8 715.8L786.8 714.5L787.8 714.7L788.8 715.4L789.8 715.3L790.8 714.9L791.8 714.9L792.8 715.1L793.8 715.0L794.8 715.0L795.8 714.7L796.8 714.5L797.8 714.2L798.8 714.7L799.8 715.1L800.8 715.8L801.8 714.6L802.8 714.9L803.8 714.3L804.8 715.1L805.8 714.3L806.8 714.9L807.8 715.3L808.8 714.9L809.8 714.0L810.8 714.6L811.8 714.9L812.8 715.3L813.8 715.0L814.8 715.4L815.8 715.0L816.8 714.6L817.8 714.7L818.8 714.7L819.8 715.5L820.8 715.4L821.8 715.2L822.8 714.0L823.8 714.3L824.8 715.2L825.8 715.4L826.8 715.3L827.8 715.6L828.8 715.3L829.8 714.8L830.8 715.6L831.8 715.3L832.8 714.3L833.8 715.1L834.8 714.3L835.8 715.0L836.8 714.1L837.8 714.1L838.8 714.6L839.8 714.3L840.8 714.0L841.8 714.7L842.8 714.6L843.8 715.2L844.8 714.8L845.8 715.1L846.8 714.4L847.8 714.7L848.8 714.3L849.8 714.3L850.8 714.4L851.8 714.5L852.8 714.7L853.8 715.7L854.8 714.6L855.8 714.5L856.8 714.6L857.8 715.0L858.8 715.0L859.8 714.5L860.8 715.5L861.8 714.8L862.8 717.0L863.8 714.7L864.8 714.2L865.8 715.1L866.8 714.1L867.8 714.4L868.8 714.5L869.8 713.9L870.8 715.0L871.8 714.2L872.8 714.5L873.8 715.2L874.8 714.8L875.8 714.0L876.8 714.3L877.8 714.9L878.8 714.2L879.8 713.8L880.8 714.7L881.8 714.2L882.8 715.1L883.8 714.8L884.8 715.1L885.8 714.4L886.8 714.0L887.8 714.5L888.8 714.8L889.8 714.2L890.8 714.8L891.8 715.2L892.8 715.4L893.8 715.4L894.8 716.5L895.8 715.0L896.8 714.2L897.8 714.2L898.8 714.4L899.8 715.0L900.8 715.6L901.8 714.5L902.8 714.7L903.8 714.5L904.8 714.2L905.8 714.1L906.8 714.2L907.8 713.9L908.8 715.2L909.8 714.5L910.8 713.9L911.8 714.7L912.8 714.1L913.8 713.5L914.8 714.8L915.8 713.9L916.8 714.3L917.8 714.9L918.8 714.7L919.8 714.4L920.8 715.0L921.8 714.8L922.8 714.1L923.5 599.9L923.8 561.9L924.8 435.0L925.5 345.3L925.8 380.9L926.3 440.1L926.8 452.2L927.1 459.5L927.8 444.6L928.5 430.4L928.8 431.0L929.8 435.4L930.8 440.0L931.8 439.9L932.8 439.8L933.8 440.1L934.8 439.5L935.8 440.4L936.8 439.5L937.8 439.3L938.8 439.4L939.8 439.6L940.8 439.3L941.8 438.1L942.8 440.5L943.8 441.5L944.8 440.0L945.8 439.9L946.8 439.4L947.8 438.7L948.5 439.6L948.8 499.4L949.3 599.7L949.8 656.7L950.0 680.1L950.8 691.2L951.8 706.2L952.8 694.1L953.0 692.7L953.8 685.9L954.8 679.0L955.8 671.1L956.2 667.7L956.8 660.3L957.8 648.6L958.8 636.8L959.8 624.2L960.8 609.7L961.8 594.5L962.8 578.7L963.8 563.5L964.8 548.2L965.3 540.6L965.8 535.5L966.8 525.7L967.8 515.3L968.8 506.2L969.8 496.7L970.7 487.2L970.8 485.6L971.8 477.7L972.8 468.3L973.8 459.7L974.4 453.5L974.8 451.7L975.8 445.0L976.8 438.6L977.8 431.5L978.0 432.6L978.8 428.4L979.8 426.7L980.5 426.1L980.8 425.8L981.8 427.8L982.8 426.5L983.8 430.3L984.8 431.3L985.2 431.1L985.8 430.6L986.8 429.9L987.8 429.0L988.8 428.4L989.8 427.1L990.8 426.7L991.8 426.0L992.5 426.0L992.8 429.4L993.8 427.2L994.8 426.8L995.8 427.6L996.8 428.8L997.8 428.6L998.0 428.8L998.8 429.5L999.8 430.7L1000.8 431.8L1001.8 432.5L1002.8 433.5L1003.4 433.6L1003.8 433.5L1004.8 433.1L1005.8 432.2L1006.8 430.7L1007.8 430.6L1008.8 429.6L1009.8 429.0L1010.7 428.0L1010.8 428.1L1011.8 428.8L1012.8 429.9L1013.8 431.3L1014.8 432.0L1015.8 432.3L1016.8 434.9L1017.8 434.1L1017.9 435.1L1018.8 434.5L1019.8 434.5L1020.8 434.9L1021.8 435.2L1022.8 434.4L1023.8 435.4L1024.8 435.1L1025.2 435.0L1025.8 436.0L1026.8 437.4L1027.8 439.4L1028.1 439.7L1028.8 448.6L1029.8 460.6L1030.8 473.1L1031.8 485.5L1032.5 493.7L1032.8 498.2L1033.8 510.8L1034.8 524.3L1035.8 538.6L1036.8 552.4L1037.8 565.8L1037.9 566.9L1038.8 577.5L1039.8 589.0L1040.8 601.1L1041.8 613.1L1042.8 625.1L1043.4 631.8L1043.8 637.0L1044.8 650.3L1045.8 662.7L1046.8 675.0L1047.8 688.7L1048.8 701.6L1049.8 706.3L1050.8 712.5L1051.4 715.8L1051.8 717.0L1052.8 717.2L1053.8 717.5L1054.8 717.5L1055.8 718.8L1056.0 719.3L1056.8 718.1L1057.8 717.9L1058.8 716.9L1059.8 717.2L1060.8 719.4L1061.8 716.8L1062.8 716.1L1063.8 716.4L1064.8 715.4L1065.0 715.8L1065.8 715.6L1066.8 715.8L1067.8 716.1L1068.8 715.5L1069.8 715.7L1070.8 715.4L1071.8 715.7L1072.8 715.3L1073.8 716.2L1074.8 715.2L1075.8 715.1L1076.8 716.1L1077.8 715.7L1078.8 715.7L1079.8 715.3L1080.8 715.4L1081.8 715.3L1082.8 715.6L1083.8 715.4L1084.8 715.7L1085.8 715.6L1086.8 715.4L1087.8 715.9L1088.8 715.1L1089.8 715.4L1090.8 715.8L1091.8 716.9L1092.8 715.4L1093.8 715.3L1094.8 716.3L1095.8 713.6L1096.8 716.5L1097.8 715.5L1098.8 715.5L1099.8 715.6L1100.8 715.8L1101.8 715.3L1102.8 715.4L1103.8 715.4L1104.8 715.2L1105.8 715.1L1106.8 715.1L1107.8 715.0L1108.8 715.0L1109.8 715.5L1110.8 715.6L1111.8 715.4L1112.8 715.3L1113.8 715.9L1114.8 716.8L1115.8 715.8L1116.8 715.9L1117.8 715.5L1118.8 715.4L1119.8 715.7L1120.8 715.1L1121.8 715.8L1122.8 715.6L1123.8 716.0L1124.8 715.1L1125.8 715.7L1126.8 715.2L1127.8 715.3L1128.8 715.4L1129.8 715.4L1130.8 715.6L1131.8 715.2L1132.8 714.3L1133.8 715.4L1134.8 715.1L1135.8 715.1L1136.8 715.5L1137.8 715.6L1138.8 715.5L1139.8 714.8L1140.8 715.0L1141.8 715.8L1142.8 715.1L1143.8 715.2L1144.8 715.0L1145.8 716.0L1146.8 715.5L1147.8 715.3L1148.8 715.3L1149.8 715.1L1150.8 715.7L1151.8 715.7L1152.8 714.9L1153.8 715.0L1154.8 715.7L1155.8 715.2L1156.8 715.0L1157.8 715.6L1158.8 715.4L1159.8 715.6L1160.8 715.9L1161.8 714.3L1162.8 716.2L1163.8 716.4L1164.8 715.2L1165.8 714.7L1166.8 714.7L1167.8 715.4L1168.8 715.3L1169.8 715.6L1170.8 715.4L1171.8 715.2L1172.8 715.5L1173.8 716.1L1174.8 714.9L1175.8 715.7L1176.8 715.2L1177.8 715.8L1178.8 715.1L1179.8 715.3L1180.8 715.0L1181.8 715.4L1182.8 715.7L1183.8 715.6L1184.8 715.1L1185.8 715.7L1186.8 715.4L1187.8 715.7L1188.8 715.3L1189.8 715.7L1190.8 715.2L1191.8 715.5L1192.8 713.5L1193.8 716.1L1194.8 715.7L1195.8 715.0L1196.8 715.6L1197.8 715.5L1198.8 716.3L1199.8 715.1L1200.8 715.6L1201.8 715.7L1202.8 714.7L1203.8 715.3L1204.8 714.6L1205.8 715.1L1206.8 714.4L1207.8 716.0L1208.8 715.3L1209.8 715.8L1210.8 715.2L1211.8 715.7L1212.8 714.9L1213.8 714.7L1214.8 715.5L1215.8 714.9L1216.8 715.2L1217.8 715.6L1218.8 714.9L1219.8 715.2L1220.8 715.5L1221.8 716.0L1222.8 715.8L1223.8 715.8L1224.8 714.4L1225.8 715.3L1226.8 715.2L1227.8 714.4L1228.8 715.3L1229.8 715.8L1230.8 715.3L1231.8 715.0L1232.8 715.5L1233.8 715.8L1234.8 715.1L1235.8 715.0L1236.8 715.6L1237.8 716.0L1238.8 714.6L1239.8 714.3L1240.8 714.3L1241.8 715.4L1242.8 715.0L1243.8 715.5L1244.8 714.8L1245.8 715.0L1246.8 714.6L1247.8 715.0L1248.8 715.4L1249.8 715.0L1250.8 715.2L1251.8 714.9L1252.8 715.0L1253.8 715.6L1254.8 715.3L1255.8 715.2L1256.8 715.2L1257.8 714.7L1258.8 714.9L1259.8 714.9L1260.8 715.1L1261.8 715.8L1262.8 715.2L1263.8 715.6L1264.8 715.8L1265.8 715.5L1266.8 715.6L1267.8 713.7L1268.8 715.1L1269.8 715.1L1270.8 714.9L1271.8 715.9L1272.8 715.7L1273.8 714.8L1274.8 715.3L1275.8 714.3L1276.8 714.7L1277.8 715.2L1278.8 715.3L1279.8 714.9L1280.8 716.0L1281.8 714.4L1282.8 714.6L1283.0 715.2L1283.8 715.6L1284.8 714.9L1285.8 716.0L1286.8 715.2L1287.8 715.4L1288.8 715.5L1289.8 715.1L1290.8 714.8L1291.8 715.1L1292.8 715.7L1293.8 715.7L1294.8 715.3L1295.8 715.5L1296.8 715.0L1297.8 714.9L1298.8 715.4L1299.8 715.4L1300.8 714.5L1301.8 715.4L1302.8 714.8L1303.8 715.7L1304.8 715.4L1305.8 716.1L1306.8 715.0L1307.8 715.2L1308.8 715.6L1309.8 714.8L1310.8 714.9L1311.8 715.0L1312.8 714.7L1313.8 715.1L1314.8 714.7L1315.8 715.5L1316.8 715.0L1317.8 715.3L1318.8 714.9L1319.8 715.7L1320.8 714.8L1321.8 715.5L1322.8 715.0L1323.8 715.4L1324.8 715.1L1325.8 715.5L1326.8 715.7L1327.8 714.6L1328.8 715.7L1329.8 715.2L1330.8 714.6L1331.8 715.4L1332.8 715.3L1333.8 714.8L1334.8 715.8L1335.8 715.7L1336.8 715.2L1337.8 715.2L1338.8 715.0L1339.8 715.5L1340.8 715.0L1341.8 714.9L1342.8 715.1L1343.8 714.8L1344.8 715.1L1345.8 715.1L1346.8 715.1L1347.8 715.2L1348.8 715.4L1349.8 715.2L1350.8 715.3L1351.8 716.0L1352.8 715.0L1353.8 714.7L1354.8 715.1L1355.8 715.3L1356.8 715.7L1357.8 714.8L1358.8 714.8L1359.8 714.8L1360.8 714.7L1361.8 715.3L1362.8 715.1L1363.8 715.0L1364.8 715.1L1365.8 715.6L1366.8 714.8L1367.8 715.0L1368.8 714.9L1369.8 715.2L1370.8 714.9L1371.8 714.5L1372.8 714.6L1373.8 715.0L1374.8 714.8L1375.8 715.9L1376.8 714.7L1377.8 715.7L1378.8 715.4L1379.8 715.6L1380.8 715.1L1381.8 714.3L1382.8 714.9L1383.8 715.3L1384.8 715.3L1385.8 715.6L1386.8 714.9L1387.8 715.5L1388.8 715.1L1389.8 715.1L1390.8 715.6L1391.8 715.4L1392.8 715.4L1393.8 715.3L1394.8 715.0L1395.8 715.0L1396.8 714.4L1397.8 714.4L1398.8 715.0L1399.8 715.3L1400.8 715.2L1401.8 714.8L1402.8 715.6L1403.8 714.3L1404.8 715.4L1405.8 714.5L1406.8 715.2L1407.8 714.7L1408.8 714.5L1409.8 715.6L1410.8 714.5L1411.8 714.8L1412.8 715.8L1413.8 714.5L1414.8 715.2L1415.8 715.3L1416.8 714.9L1417.8 714.8L1418.8 715.1L1419.8 715.1L1420.8 715.0L1421.8 715.0L1422.8 715.1L1423.8 714.6L1424.8 714.6L1425.8 715.0L1426.8 714.6L1427.8 714.4L1428.8 714.9L1429.8 715.4L1430.8 715.1L1431.8 715.2L1432.8 715.9L1433.8 714.8L1434.8 715.5L1435.8 714.9L1436.8 714.7L1437.8 714.5L1438.8 715.4L1439.8 714.9L1440.8 714.5L1441.8 715.7L1442.8 714.8L1443.8 714.6L1444.8 714.6L1445.8 715.4L1446.8 714.6L1447.8 714.8L1448.8 715.4L1449.8 714.7L1450.8 715.0L1451.8 715.1L1452.8 714.5L1453.8 715.0L1454.8 715.3L1455.8 715.3L1456.8 714.8L1457.8 715.0L1458.8 714.4L1459.8 714.8L1460.8 715.6L1461.8 714.9L1462.8 714.8L1463.8 715.1L1464.8 715.0L1465.8 714.7L1466.8 713.4L1467.8 715.3L1468.8 714.8L1469.8 715.0L1470.8 716.0L1471.8 715.6L1472.8 714.9L1473.8 714.6L1474.8 717.2L1475.8 714.3L1476.8 714.5L1477.8 715.4L1478.8 715.5L1479.8 715.1L1480.8 715.0L1481.8 714.7L1482.8 714.9L1483.8 715.2L1484.8 717.0L1485.8 714.8L1486.8 714.9L1487.8 715.1L1488.8 714.6L1489.8 714.3L1490.8 715.6L1491.8 714.9L1492.8 716.2L1493.8 715.1L1494.8 715.7L1495.8 715.1L1496.8 714.6L1497.8 714.5L1498.8 714.8L1499.8 714.5L1500.8 714.5L1501.8 714.9L1502.8 715.3L1503.8 715.3L1504.8 714.8L1505.8 714.5L1506.8 714.8L1507.8 715.2L1508.8 714.9L1509.8 715.7L1510.8 714.9L1511.8 714.7L1512.8 715.3L1513.8 714.9L1514.8 715.3L1515.8 715.4L1516.8 715.1L1517.8 715.0L1518.8 715.5L1519.8 715.3L1520.8 714.9L1521.8 714.7L1522.8 714.7L1523.8 715.2L1524.8 715.3L1525.8 714.4L1526.8 714.5L1527.8 714.1L1528.8 715.4L1529.8 714.4L1530.8 715.1L1531.8 715.7L1532.8 714.3L1533.8 715.3L1534.8 715.3L1535.8 715.4L1536.8 714.3L1537.8 714.0L1538.8 715.3L1539.8 714.6L1540.8 713.8L1541.8 715.1L1542.8 715.5L1543.8 714.5L1544.8 715.2L1545.8 714.5L1546.8 714.8L1547.8 714.9L1548.8 715.1L1549.8 714.6L1550.8 714.8L1551.8 715.0L1552.8 715.5L1553.8 715.2L1554.8 715.1L1555.8 716.8L1556.8 715.1L1557.8 714.7L1558.8 714.6L1559.8 714.5L1560.8 715.2L1561.8 715.0L1562.8 714.6L1563.8 715.2L1564.8 714.8L1565.8 714.8L1566.8 714.9L1567.8 714.8L1568.8 714.7L1569.8 715.0L1570.8 714.8L1571.8 714.6L1572.8 714.3L1573.8 714.7L1574.8 714.5L1575.8 714.6L1576.8 714.6L1577.8 714.1L1578.8 715.0L1579.8 713.7L1580.8 713.9L1581.8 716.7L1582.8 715.4L1583.8 715.2L1584.8 714.5L1585.8 714.5L1586.8 714.6L1587.8 714.6L1588.8 714.8L1589.8 714.5L1590.8 715.4L1591.8 714.3L1592.8 714.4L1593.8 714.7L1594.8 715.0L1595.8 714.6L1596.8 714.6L1597.8 714.9L1598.8 714.7L1599.8 714.7L1600.8 714.6L1601.8 714.4L1602.8 715.1L1603.8 714.5L1604.8 714.8L1605.8 714.8L1606.8 714.5L1607.8 715.0L1608.8 715.1L1609.8 714.4L1610.8 713.8L1611.8 714.9L1612.8 715.0L1613.8 717.2L1614.8 715.1L1615.8 715.3L1616.8 714.0L1617.8 714.3L1618.8 714.3L1619.8 715.3L1620.8 715.6L1621.8 716.0L1622.8 715.2L1623.8 715.5L1624.8 714.4L1625.8 714.7L1626.8 714.4L1627.8 715.0L1628.8 714.4L1629.8 714.9L1630.8 717.1L1631.8 715.3L1632.8 714.8L1633.8 717.1L1634.8 714.9L1635.8 714.8L1636.8 714.7L1637.8 714.7L1638.8 714.4L1639.8 714.3L1640.8 715.2L1641.8 713.9L1642.8 715.4L1643.8 713.9L1644.8 714.7L1645.8 714.6L1646.8 714.7L1647.8 714.8L1648.8 714.7L1649.8 715.1L1650.8 714.6L1651.8 715.0L1652.8 714.7L1653.8 714.4L1654.8 714.5L1655.8 714.8L1656.8 715.0L1657.8 713.9L1658.8 713.5L1659.8 714.7L1660.8 715.4L1661.8 714.6L1662.8 714.6L1663.8 714.6L1664.8 714.1L1665.8 714.5L1666.8 714.2L1667.8 714.8L1668.8 714.3L1669.8 714.7L1670.8 715.0L1671.8 714.0L1672.8 715.7L1673.8 715.1L1674.8 714.7L1675.8 714.5L1676.8 715.3L1677.8 714.3L1678.8 714.9L1679.8 714.4L1680.8 714.8L1681.8 714.7L1682.8 714.7L1683.8 714.9L1684.8 715.0L1685.8 715.1L1686.8 715.0L1687.8 714.2L1688.8 714.1L1689.8 715.3L1690.8 714.5L1691.8 714.3L1692.8 714.3L1693.8 714.6L1694.8 714.5L1695.8 715.1L1696.8 714.6L1697.8 716.6L1698.8 714.3L1699.8 715.0L1700.8 716.6L1701.8 717.0L1702.8 714.9L1703.8 714.7L1704.8 714.5L1705.8 714.9L1706.8 714.1L1707.8 714.0L1708.8 714.8L1709.8 714.1L1710.8 714.3L1711.8 714.8L1712.8 714.1L1713.8 714.9L1714.8 714.2L1715.8 715.0L1716.8 715.2L1717.8 714.5L1718.8 714.5L1719.8 714.7L1720.8 714.1L1721.8 714.5L1722.8 715.1L1723.8 714.7L1724.8 714.8L1725.8 714.2L1726.8 714.2L1727.8 714.8L1728.8 714.3L1729.8 714.0L1730.8 714.4L1731.8 714.1L1732.8 714.8L1733.8 714.8L1734.8 714.7L1735.8 714.7L1736.8 715.2L1737.8 714.8L1738.8 715.2L1739.8 714.8L1740.8 715.3L1741.8 714.6L1742.8 712.7L1743.8 715.0L1744.8 714.5L1745.8 714.9L1746.8 714.1L1747.8 714.4L1748.8 714.3L1749.8 715.3L1750.8 714.6L1751.8 714.8L1752.8 714.2L1753.8 714.9L1754.8 714.1L1755.8 715.1L1756.8 714.4L1757.8 714.5L1758.8 714.1L1759.8 714.8L1760.8 714.6L1761.8 714.2L1762.8 714.2L1763.8 714.3L1764.8 714.6L1765.8 714.4L1766.8 715.3L1767.8 714.8L1768.8 714.9L1769.8 715.4L1770.8 713.9L1771.8 714.5L1772.8 714.7L1773.8 715.3L1774.8 714.6L1775.8 714.7L1776.8 714.9L1777.8 714.4L1778.8 715.0L1779.8 714.2L1780.8 714.5L1781.8 714.4L1782.8 714.6L1783.8 715.0L1784.8 715.0L1785.8 715.2L1786.8 714.9L1787.8 715.1L1788.8 714.9L1789.8 714.6L1790.8 714.3L1791.8 714.5L1792.8 714.0L1793.8 714.8L1794.8 715.2L1795.8 715.1L1796.8 714.2L1797.8 714.4L1798.8 713.6L1799.8 714.5L1800.8 714.8L1801.8 714.1L1802.8 714.7L1803.8 714.7L1804.8 714.6L1805.8 715.4L1806.8 714.8L1807.8 714.4L1808.8 714.8L1809.8 714.6L1810.8 714.5L1811.8 714.2L1812.8 714.9L1813.8 714.7L1814.8 714.6L1815.8 714.0L1816.8 714.3L1817.8 714.5L1818.8 714.1L1819.8 714.3L1820.8 714.6L1821.8 714.7L1822.8 714.9L1823.8 713.8L1824.8 715.1L1825.8 714.9L1826.8 714.3L1827.8 714.4L1828.8 714.0L1829.8 714.4L1830.8 714.2L1831.8 714.6L1832.8 714.8L1833.8 716.3L1834.8 713.7L1835.8 714.5L1836.8 714.5L1837.8 715.1L1838.8 714.8L1839.8 714.5L1840.8 714.6L1841.8 714.3L1842.8 713.9L1843.8 714.0L1844.8 714.5L1845.8 715.0L1846.8 714.0L1847.8 714.0L1848.8 714.6L1849.8 716.0L1850.8 714.5L1851.8 714.3L1852.8 714.2L1853.8 714.4L1854.8 714.7L1855.8 715.3L1856.8 714.4L1857.8 714.4L1858.8 714.1L1859.8 714.4L1860.8 715.2L1861.8 714.7L1862.8 713.9L1863.8 714.7L1864.8 714.6L1865.8 714.0L1866.8 714.4L1867.8 715.0L1868.8 713.7L1869.8 714.6L1870.8 714.0L1871.8 714.8L1872.8 714.4L1873.8 713.9L1874.8 715.0L1875.8 714.7L1876.8 714.6L1877.8 714.1L1878.8 714.8L1879.8 714.0L1880.8 714.9L1881.8 714.6L1882.8 714.4L1883.8 714.0L1884.8 714.5L1885.8 715.0L1886.8 714.7L1887.8 714.1L1888.8 713.6L1889.8 713.8L1890.8 714.1L1891.8 714.6L1892.8 714.7L1893.8 714.6L1894.8 713.7L1895.8 715.4L1896.8 713.9L1897.8 714.6L1898.8 714.1L1899.8 714.1L1900.8 714.2L1901.8 714.6L1902.8 714.7L1903.8 713.6L1904.8 714.0L1905.8 715.1L1906.8 715.0L1907.8 715.7L1908.8 714.6L1909.8 714.5L1910.8 714.3L1911.8 713.7L1912.8 714.4L1913.8 713.7L1914.8 714.3L1915.8 714.8L1916.8 714.3L1917.8 714.7L1918.8 714.0L1919.8 713.5L1920.8 714.1L1921.8 712.3L1922.8 714.6L1923.8 714.6L1924.8 714.6L1925.8 714.8L1926.8 714.3L1927.8 714.3L1928.8 714.7L1929.8 715.1L1930.8 714.6L1931.8 714.8L1932.8 714.4L1933.8 715.0L1934.8 714.2L1935.8 714.4L1936.8 713.2L1937.8 714.4L1938.8 714.0L1939.8 715.0L1940.8 713.5L1941.8 714.1L1942.8 714.6L1943.8 714.4L1944.8 714.7L1945.8 714.0L1946.8 713.9L1947.8 714.8L1948.8 713.7L1949.8 714.4L1950.8 714.1L1951.8 713.9L1952.8 714.1L1953.8 714.3L1954.8 713.9L1955.8 714.3L1956.8 714.6L1957.8 714.4L1958.8 714.5L1959.8 713.9L1960.8 714.2L1961.8 713.9L1962.8 713.0L1963.8 714.6L1964.8 713.9L1965.8 714.1L1966.8 714.3L1967.8 714.4L1968.8 714.1L1969.8 713.9L1970.8 714.1L1971.8 714.8L1972.8 714.0L1973.8 713.6L1974.8 714.2L1975.8 713.9L1976.8 714.1L1977.8 714.5L1978.8 713.7L1979.8 714.2L1980.8 714.2L1981.8 714.4L1982.8 714.6L1983.8 713.8L1984.8 714.0L1985.8 714.1L1986.8 714.4L1987.8 714.0L1988.8 713.4L1989.8 714.2L1990.8 714.5L1991.8 713.7L1992.8 714.1L1993.8 713.6L1994.8 714.7L1995.8 714.5L1996.8 714.3L1997.8 714.5L1998.8 714.9L1999.8 714.1L2000.8 714.9L2001.8 713.0L2002.8 714.3L2003.8 713.8L2004.8 713.8L2005.8 713.9L2006.8 713.8L2007.8 714.3L2008.8 714.7L2009.8 714.1L2010.8 714.3L2011.8 713.9L2012.8 714.1L2013.8 713.9L2014.8 714.2L2015.8 714.6L2016.8 714.4L2017.8 714.3L2018.0 713.7" fill="none" stroke="#1212b4" stroke-width="2.1" stroke-linejoin="round"/>
<path d="M414.6 376V458M417.4 428V450" stroke="#1212b4" stroke-width="3.2" fill="none"/>
<path d="M925.6 381V430" stroke="#1212b4" stroke-width="3.2" fill="none"/>
<path d="M931 439.5H948.5M716 714.3H923M1283 714.6H2018" stroke="#1212b4" stroke-width="3.6" fill="none"/>
<path d="M413.6 501L423.2 510.6L413.6 520.2L404 510.6Z" fill="#f4ee2c" stroke="#3a3a20" stroke-width="1.5"/>
<text x="158.5" y="272.0" font-size="21.2" fill="#2a2a78" text-anchor="end">200.0</text>
<text x="158.5" y="384.7" font-size="21.2" fill="#2a2a78" text-anchor="end">150.0</text>
<text x="158.5" y="497.3" font-size="21.2" fill="#2a2a78" text-anchor="end">100.0</text>
<text x="158.5" y="610.0" font-size="21.2" fill="#2a2a78" text-anchor="end">50.0</text>
<text x="158.5" y="722.6" font-size="21.2" fill="#2a2a78" text-anchor="end">0.0</text>
<text x="158.5" y="835.2" font-size="21.2" fill="#2a2a78" text-anchor="end">-50.0</text>
<text x="158.5" y="947.9" font-size="21.2" fill="#2a2a78" text-anchor="end">-100.0</text>
<text x="229.5" y="272.0" font-size="21.2" fill="#46704c" text-anchor="end">1.25</text>
<text x="229.5" y="384.7" font-size="21.2" fill="#46704c" text-anchor="end">1.0</text>
<text x="229.5" y="497.3" font-size="21.2" fill="#46704c" text-anchor="end">0.75</text>
<text x="229.5" y="610.0" font-size="21.2" fill="#46704c" text-anchor="end">0.5</text>
<text x="229.5" y="722.6" font-size="21.2" fill="#46704c" text-anchor="end">0.25</text>
<text x="229.5" y="835.2" font-size="21.2" fill="#46704c" text-anchor="end">0.0</text>
<text x="229.5" y="947.9" font-size="21.2" fill="#46704c" text-anchor="end">-0.25</text>
<text x="229.5" y="1060.5" font-size="21.2" fill="#46704c" text-anchor="end">-0.5</text>
<text x="229.5" y="1173.2" font-size="21.2" fill="#46704c" text-anchor="end">-0.75</text>
<text x="229.5" y="1285.8" font-size="21.2" fill="#46704c" text-anchor="end">-1.0</text>
<text x="229.5" y="1398.5" font-size="21.2" fill="#46704c" text-anchor="end">-1.25</text>
<text x="2022.4" y="272.0" font-size="21.2" fill="#b42c34" text-anchor="start">400.0</text>
<text x="2022.4" y="384.7" font-size="21.2" fill="#b42c34" text-anchor="start">350.0</text>
<text x="2022.4" y="497.3" font-size="21.2" fill="#b42c34" text-anchor="start">300.0</text>
<text x="2022.4" y="610.0" font-size="21.2" fill="#b42c34" text-anchor="start">250.0</text>
<text x="2022.4" y="722.6" font-size="21.2" fill="#b42c34" text-anchor="start">200.0</text>
<text x="2022.4" y="835.2" font-size="21.2" fill="#b42c34" text-anchor="start">150.0</text>
<text x="2022.4" y="947.9" font-size="21.2" fill="#b42c34" text-anchor="start">100.0</text>
<text x="2022.4" y="1060.5" font-size="21.2" fill="#b42c34" text-anchor="start">50.0</text>
<text x="2022.4" y="1173.2" font-size="21.2" fill="#b42c34" text-anchor="start">0.0</text>
<text x="2022.4" y="1285.8" font-size="21.2" fill="#b42c34" text-anchor="start">-50.0</text>
<text x="2022.4" y="1398.5" font-size="21.2" fill="#b42c34" text-anchor="start">-100.0</text>
<text x="163.0" y="301.5" font-size="21.2" fill="#2a2a78" text-anchor="end">V</text>
<text x="230.0" y="301.5" font-size="21.2" fill="#46704c" text-anchor="end">V</text>
<text x="2022.0" y="301.5" font-size="21.2" fill="#b42c34" text-anchor="start">V</text>
<rect x="97.5" y="259.5" width="12" height="11.5" fill="#1414b0"/>
<rect x="167.5" y="259" width="12" height="12" fill="#3c7440" stroke="#2a4a2c" stroke-width="1.4"/>
<rect x="2071.5" y="258.5" width="12.5" height="12.5" fill="#d0121c" stroke="#8c1a1e" stroke-width="1.2"/>
<text x="234.3" y="1424.0" font-size="21.2" fill="#111" text-anchor="middle">-1.0</text>
<text x="414.0" y="1424.0" font-size="21.2" fill="#111" text-anchor="middle">0.0</text>
<text x="592.2" y="1424.0" font-size="21.2" fill="#111" text-anchor="middle">1.0</text>
<text x="770.5" y="1424.0" font-size="21.2" fill="#111" text-anchor="middle">2.0</text>
<text x="948.7" y="1424.0" font-size="21.2" fill="#111" text-anchor="middle">3.0</text>
<text x="1126.9" y="1424.0" font-size="21.2" fill="#111" text-anchor="middle">4.0</text>
<text x="1305.1" y="1424.0" font-size="21.2" fill="#111" text-anchor="middle">5.0</text>
<text x="1483.3" y="1424.0" font-size="21.2" fill="#111" text-anchor="middle">6.0</text>
<text x="1661.6" y="1424.0" font-size="21.2" fill="#111" text-anchor="middle">7.0</text>
<text x="1839.8" y="1424.0" font-size="21.2" fill="#111" text-anchor="middle">8.0</text>
<text x="2018.0" y="1424.0" font-size="21.2" fill="#111" text-anchor="middle">9.0</text>
<text x="238.0" y="1449.5" font-size="21.2" fill="#111" text-anchor="start">ms</text>
<rect x="229.7" y="1391.5" width="11.5" height="11.5" fill="#fff" stroke="#111" stroke-width="2"/>
<rect x="99" y="1429" width="63.5" height="23" fill="#7a7af0"/>
<text x="130.7" y="1446.8" font-size="16.5" fill="#c9c9ff" text-anchor="middle">x1.0</text>
<rect x="168.7" y="1429" width="63.5" height="23" fill="#8cba8c"/>
<text x="200.4" y="1446.8" font-size="16.5" fill="#c4e6c4" text-anchor="middle">x4.0</text>
<rect x="2019" y="1429" width="63.6" height="23" fill="#f4868c"/>
<text x="2050.8" y="1446.8" font-size="16.5" fill="#ffd0d0" text-anchor="middle">x1.0</text>
</svg>
<!-- legend on the right -->
<div class="leg" style="left:2149.5px;top:276.5px;color:#333399">Blue</div>
<div class="leg" style="left:2149.5px;top:356.8px;color:#ff0000">Red</div>
<div class="leg" style="left:2149.5px;top:437.3px;color:#009900">Green</div>
<div class="leg" style="left:2437.4px;top:276.5px;color:#000">S</div>
<div class="leg" style="left:2437.4px;top:356.8px;color:#000">S</div>
<div class="leg" style="left:2437.4px;top:437.3px;color:#000">C</div>
<svg width="40" height="200" viewBox="0 0 40 200" style="position:absolute;left:2380px;top:310px">
  <path d="M5.2 3.8h32.6v6.6H5.2zM5.2 21.4h32.6v6.6H5.2zM5.2 84.2h32.6v6.6H5.2zM5.2 101.8h32.6v6.6H5.2zM5.2 163.6h32.6v6.6H5.2zM5.2 181.2h32.6v6.6H5.2z" fill="#000"/>
</svg>
</body>
</html>
